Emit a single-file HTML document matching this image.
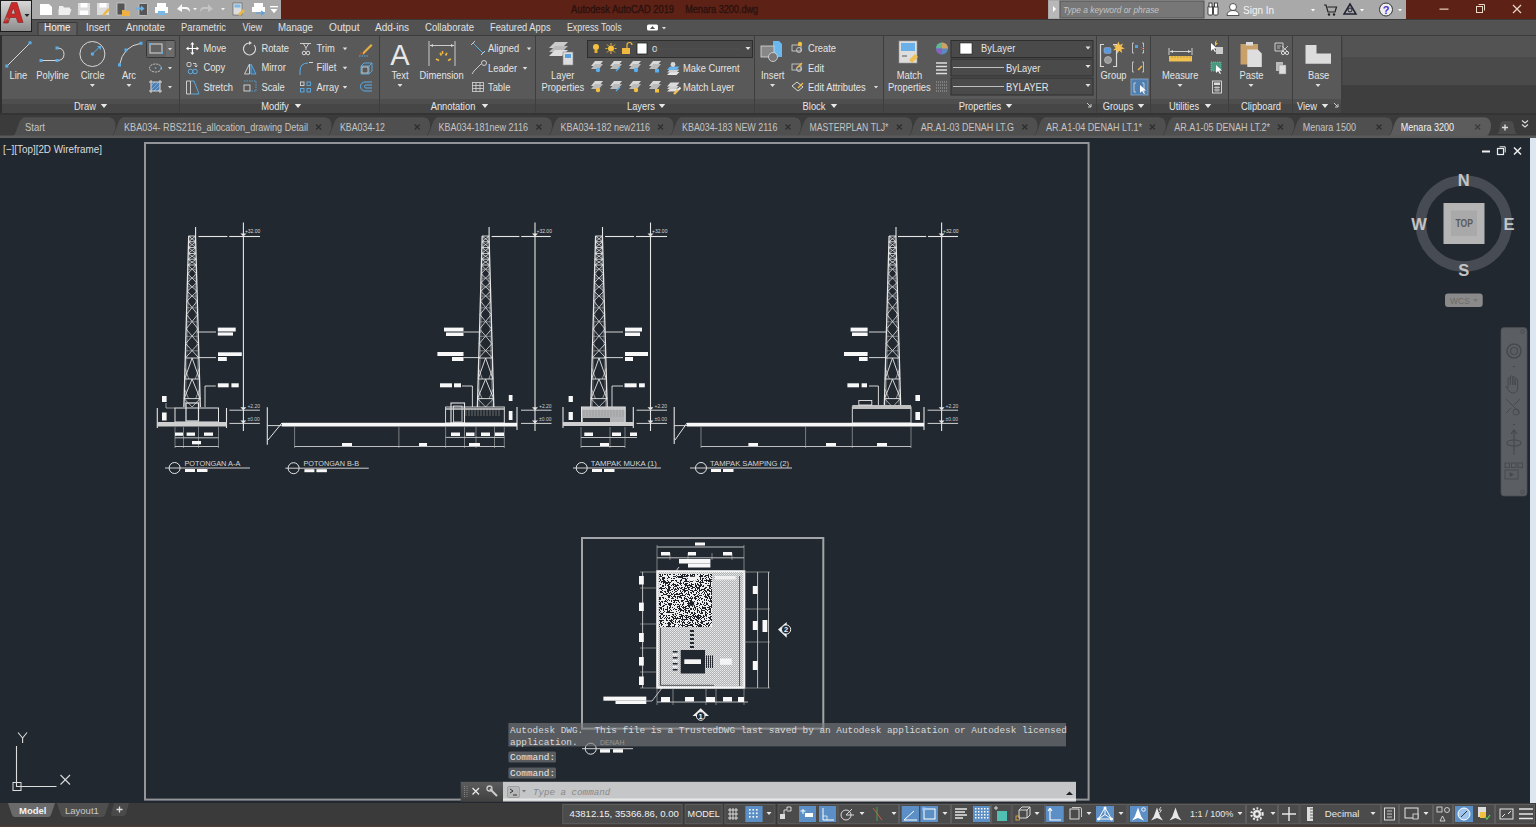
<!DOCTYPE html><html><head><meta charset="utf-8"><style>*{margin:0;padding:0;box-sizing:border-box}html,body{width:1536px;height:827px;overflow:hidden;background:#212830;font-family:"Liberation Sans",sans-serif;position:relative}.a{position:absolute;display:block}</style></head><body>
<svg class="a" style="left:0;top:0" width="1536" height="138" viewBox="0 0 1536 138">
<defs><linearGradient id="appbtn" x1="0" y1="0" x2="0" y2="1"><stop offset="0" stop-color="#d8d8d8"/><stop offset="1" stop-color="#8c8c8c"/></linearGradient><linearGradient id="rgrad" x1="0" y1="0" x2="0" y2="1"><stop offset="0" stop-color="#555"/><stop offset="0.35" stop-color="#4f4f4f"/><stop offset="1" stop-color="#3d3d3d"/></linearGradient><linearGradient id="tabg" x1="0" y1="0" x2="0" y2="1"><stop offset="0" stop-color="#555"/><stop offset="1" stop-color="#4a4a4a"/></linearGradient></defs>
<rect x="0" y="0" width="1536" height="19" fill="#5e2116"/>
<rect x="32" y="0" width="249" height="19" fill="#a9a9a9"/>
<rect x="1048" y="0" width="358" height="19" fill="#a9a9a9"/>
<text x="571" y="13" font-size="10" fill="#2a120e" text-anchor="start" font-weight="normal" xml:space="preserve" style="font-family:'Liberation Sans'" textLength="103" lengthAdjust="spacingAndGlyphs" stroke="#2a120e" stroke-width="0.35">Autodesk AutoCAD 2019</text>
<text x="685.2" y="13" font-size="10" fill="#2a120e" text-anchor="start" font-weight="normal" xml:space="preserve" style="font-family:'Liberation Sans'" textLength="73" lengthAdjust="spacingAndGlyphs" stroke="#2a120e" stroke-width="0.35">Menara 3200.dwg</text>
<rect x="1439.5" y="8.5" width="9" height="1.3" fill="#dcc4aa"/>
<rect x="1476.5" y="6.5" width="6" height="6" fill="none" stroke="#e8d8c8" stroke-width="1"/><path d="M1478.5,4.5 h6 v6" fill="none" stroke="#e8d8c8" stroke-width="1"/>
<path d="M1513,5 l8,8 M1521,5 l-8,8" stroke="#e8d8c8" stroke-width="1.2"/>
<rect x="1049" y="1" width="10" height="17" fill="#b8b8b8"/><path d="M1053,6 l3,3 l-3,3z" fill="#fff"/>
<rect x="1060" y="1" width="144" height="17" fill="#777" stroke="#555" stroke-width="1"/>
<text x="1063" y="13" font-size="9.5" fill="#c4c4c4" text-anchor="start" font-weight="normal" xml:space="preserve" style="font-family:'Liberation Sans'" font-style="italic" textLength="96" lengthAdjust="spacingAndGlyphs">Type a keyword or phrase</text>
<g fill="#fff" stroke="#222" stroke-width="0.8"><rect x="1208" y="6" width="4.5" height="9" rx="1"/><rect x="1213.5" y="6" width="4.5" height="9" rx="1"/><rect x="1209" y="3" width="3" height="4"/><rect x="1214.5" y="3" width="3" height="4"/></g>
<g fill="#fff" stroke="#333" stroke-width="0.8"><circle cx="1233" cy="7" r="3.5"/><path d="M1227,15.5 q0,-5 6,-5 q6,0 6,5z"/></g>
<text x="1243" y="13.5" font-size="10" fill="#f4f4f4" text-anchor="start" font-weight="normal" xml:space="preserve" style="font-family:'Liberation Sans'">Sign In</text>
<path d="M1311.0,9 h4 l-2.0,2.4z" fill="#fff"/>
<path d="M1324,5 h2 l2,7 h7 l1.5,-5 h-9" fill="none" stroke="#222" stroke-width="1.2"/><circle cx="1329" cy="14.5" r="1.2" fill="#222"/><circle cx="1334" cy="14.5" r="1.2" fill="#222"/>
<path d="M1350,4 l6,10 h-12z" fill="none" stroke="#223" stroke-width="1.5"/><circle cx="1350" cy="10" r="2" fill="none" stroke="#223" stroke-width="1"/>
<path d="M1360.0,9 h4 l-2.0,2.4z" fill="#fff"/>
<circle cx="1386" cy="9.5" r="6.5" fill="#eee" stroke="#333" stroke-width="1"/>
<text x="1386" y="13.5" font-size="11" fill="#5030d0" text-anchor="middle" font-weight="bold" xml:space="preserve" style="font-family:'Liberation Sans'">?</text>
<path d="M1398.0,9 h4 l-2.0,2.4z" fill="#fff"/>
<path d="M40,4 h9 l3,3 v8 h-12z" fill="#fff"/>
<path d="M59,6 h4 l1,1.5 h6 v1.5 h-11z M58.5,9 h13 l-2,6 h-11z" fill="#eee"/>
<g><rect x="78" y="3" width="12" height="12" fill="#ddd"/><rect x="80.5" y="3" width="7" height="4.5" fill="#fff"/><rect x="80" y="10.5" width="8" height="4.5" fill="#fff"/></g>
<g><rect x="97" y="3" width="12" height="12" fill="#ddd"/><rect x="99.5" y="3" width="7" height="4.5" fill="#fff"/><path d="M102,15 l6,-7 l2,2 l-6,6z" fill="#e8b84a"/></g>
<g><rect x="117" y="3" width="8" height="12" rx="1" fill="#555" stroke="#ccc" stroke-width="0.8"/><path d="M122,10 h3 l1,1 h4 v5 h-8z" fill="#f0b040"/></g>
<g><rect x="139" y="3.5" width="8.5" height="12" rx="1" fill="#555" stroke="#ccc" stroke-width="0.8"/><path d="M136,7.5 h5 v-2 l3.5,3 l-3.5,3 v-2 h-5z" fill="#6ab0e8"/></g>
<g><rect x="157" y="3" width="9" height="4" fill="#fff"/><rect x="155" y="7" width="13" height="6" fill="#fff"/><rect x="158" y="11" width="7" height="4" fill="#7ab8e8"/></g>
<path d="M177,9 l5,-5 v3 h4 q4,0 4,5 q-2,-3 -4,-3 h-4 v3z" fill="#fafafa"/>
<path d="M193.0,8 h4 l-2.0,2.4z" fill="#eee"/>
<path d="M213,9 l-5,-5 v3 h-4 q-4,0 -4,5 q2,-3 4,-3 h4 v3z" fill="#c4c4c4"/>
<path d="M221.0,8 h4 l-2.0,2.4z" fill="#eee"/>
<g><rect x="233" y="3" width="9" height="12" fill="#ddd" stroke="#555" stroke-width="0.6"/><rect x="234.5" y="4.5" width="6" height="3" fill="#7ab8e8"/><path d="M238,14 l5,-5 l2,2 l-5,5z" fill="#e8b84a"/></g>
<g><rect x="254" y="3" width="9" height="4" fill="#fff"/><rect x="252" y="7" width="13" height="5" fill="#fff"/><path d="M256,13 h8 M261,11 l3,2 l-3,2" stroke="#5aa0e0" stroke-width="1.2" fill="none"/></g>
<rect x="270" y="6" width="8" height="1.3" fill="#fff"/><path d="M270.5,9 h7 l-3.5,4.2z" fill="#fff"/>
<rect x="0" y="19" width="1536" height="16" fill="#525252"/>
<rect x="32" y="19" width="1504" height="1" fill="#3a3a3a"/>
<path d="M38,35 V22.5 h39 V35" fill="#5e5e5e" stroke="#383838" stroke-width="1"/>
<text x="44" y="31" font-size="10" fill="#f0f0f0" text-anchor="start" font-weight="normal" xml:space="preserve" style="font-family:'Liberation Sans'" textLength="26.6" lengthAdjust="spacingAndGlyphs">Home</text>
<text x="86" y="31" font-size="10" fill="#e0e0e0" text-anchor="start" font-weight="normal" xml:space="preserve" style="font-family:'Liberation Sans'" textLength="24" lengthAdjust="spacingAndGlyphs">Insert</text>
<text x="126" y="31" font-size="10" fill="#e0e0e0" text-anchor="start" font-weight="normal" xml:space="preserve" style="font-family:'Liberation Sans'" textLength="39" lengthAdjust="spacingAndGlyphs">Annotate</text>
<text x="181" y="31" font-size="10" fill="#e0e0e0" text-anchor="start" font-weight="normal" xml:space="preserve" style="font-family:'Liberation Sans'" textLength="45" lengthAdjust="spacingAndGlyphs">Parametric</text>
<text x="242.5" y="31" font-size="10" fill="#e0e0e0" text-anchor="start" font-weight="normal" xml:space="preserve" style="font-family:'Liberation Sans'" textLength="19.5" lengthAdjust="spacingAndGlyphs">View</text>
<text x="278" y="31" font-size="10" fill="#e0e0e0" text-anchor="start" font-weight="normal" xml:space="preserve" style="font-family:'Liberation Sans'" textLength="35" lengthAdjust="spacingAndGlyphs">Manage</text>
<text x="329" y="31" font-size="10" fill="#e0e0e0" text-anchor="start" font-weight="normal" xml:space="preserve" style="font-family:'Liberation Sans'" textLength="30.5" lengthAdjust="spacingAndGlyphs">Output</text>
<text x="375" y="31" font-size="10" fill="#e0e0e0" text-anchor="start" font-weight="normal" xml:space="preserve" style="font-family:'Liberation Sans'" textLength="34" lengthAdjust="spacingAndGlyphs">Add-ins</text>
<text x="425" y="31" font-size="10" fill="#e0e0e0" text-anchor="start" font-weight="normal" xml:space="preserve" style="font-family:'Liberation Sans'" textLength="49" lengthAdjust="spacingAndGlyphs">Collaborate</text>
<text x="490" y="31" font-size="10" fill="#e0e0e0" text-anchor="start" font-weight="normal" xml:space="preserve" style="font-family:'Liberation Sans'" textLength="60.6" lengthAdjust="spacingAndGlyphs">Featured Apps</text>
<text x="567" y="31" font-size="10" fill="#e0e0e0" text-anchor="start" font-weight="normal" xml:space="preserve" style="font-family:'Liberation Sans'" textLength="54.6" lengthAdjust="spacingAndGlyphs">Express Tools</text>
<rect x="647" y="24.5" width="11" height="6" rx="1.5" fill="#fff"/><path d="M650,29 l2.5,-3 l2.5,3z" fill="#525252"/>
<path d="M662.0,27 h4 l-2.0,2.4z" fill="#ddd"/>
<rect x="0.5" y="0.5" width="31" height="31" fill="url(#appbtn)" stroke="#1c1c1c" stroke-width="1"/>
<path d="M3.5,23 L11.5,2.5 h5.5 L23,22.5 h-5 l-1.8,-5 h-6.2 l-1.9,5.5z M11,14 h4.3 l-1.9,-6z" fill="#c82a2a" stroke="#7a2020" stroke-width="0.6"/><path d="M5,21 l2,-3 l2,2" stroke="#a87060" stroke-width="1.2" fill="none"/>
<path d="M24.5,14 h5 l-2.5,3z" fill="#222"/>
<rect x="0" y="35" width="1536" height="22" fill="#535353"/><rect x="0" y="57" width="1536" height="28" fill="#4a4a4a"/><rect x="0" y="85" width="1536" height="29" fill="#3e3e3e"/>
<rect x="0" y="35" width="1536" height="1" fill="#3c3c3c"/>
<rect x="0" y="35" width="2" height="79" fill="#2f2f2f"/>
<rect x="2" y="36" width="178" height="63" fill="#595959"/>
<rect x="2" y="99" width="178" height="5" fill="#4e4e4e"/>
<rect x="2" y="104" width="178" height="9.5" fill="#464646"/>
<rect x="179" y="36" width="1.3" height="78" fill="#3e3e3e"/>
<text transform="translate(85,110) scale(0.935,1)" x="0" y="0" font-size="10.0" fill="#e6e6e6" text-anchor="middle" font-weight="normal" xml:space="preserve" style="font-family:'Liberation Sans'">Draw</text>
<rect x="180" y="36" width="200" height="63" fill="#595959"/>
<rect x="180" y="99" width="200" height="5" fill="#4e4e4e"/>
<rect x="180" y="104" width="200" height="9.5" fill="#464646"/>
<rect x="379" y="36" width="1.3" height="78" fill="#3e3e3e"/>
<text transform="translate(275,110) scale(0.935,1)" x="0" y="0" font-size="10.0" fill="#e6e6e6" text-anchor="middle" font-weight="normal" xml:space="preserve" style="font-family:'Liberation Sans'">Modify</text>
<rect x="380" y="36" width="156" height="63" fill="#595959"/>
<rect x="380" y="99" width="156" height="5" fill="#4e4e4e"/>
<rect x="380" y="104" width="156" height="9.5" fill="#464646"/>
<rect x="535" y="36" width="1.3" height="78" fill="#3e3e3e"/>
<text transform="translate(453,110) scale(0.935,1)" x="0" y="0" font-size="10.0" fill="#e6e6e6" text-anchor="middle" font-weight="normal" xml:space="preserve" style="font-family:'Liberation Sans'">Annotation</text>
<rect x="536" y="36" width="219" height="63" fill="#595959"/>
<rect x="536" y="99" width="219" height="5" fill="#4e4e4e"/>
<rect x="536" y="104" width="219" height="9.5" fill="#464646"/>
<rect x="754" y="36" width="1.3" height="78" fill="#3e3e3e"/>
<text transform="translate(641,110) scale(0.935,1)" x="0" y="0" font-size="10.0" fill="#e6e6e6" text-anchor="middle" font-weight="normal" xml:space="preserve" style="font-family:'Liberation Sans'">Layers</text>
<rect x="755" y="36" width="129" height="63" fill="#595959"/>
<rect x="755" y="99" width="129" height="5" fill="#4e4e4e"/>
<rect x="755" y="104" width="129" height="9.5" fill="#464646"/>
<rect x="883" y="36" width="1.3" height="78" fill="#3e3e3e"/>
<text transform="translate(814,110) scale(0.935,1)" x="0" y="0" font-size="10.0" fill="#e6e6e6" text-anchor="middle" font-weight="normal" xml:space="preserve" style="font-family:'Liberation Sans'">Block</text>
<rect x="884" y="36" width="213" height="63" fill="#595959"/>
<rect x="884" y="99" width="213" height="5" fill="#4e4e4e"/>
<rect x="884" y="104" width="213" height="9.5" fill="#464646"/>
<rect x="1096" y="36" width="1.3" height="78" fill="#3e3e3e"/>
<text transform="translate(980,110) scale(0.935,1)" x="0" y="0" font-size="10.0" fill="#e6e6e6" text-anchor="middle" font-weight="normal" xml:space="preserve" style="font-family:'Liberation Sans'">Properties</text>
<rect x="1097" y="36" width="54" height="63" fill="#595959"/>
<rect x="1097" y="99" width="54" height="5" fill="#4e4e4e"/>
<rect x="1097" y="104" width="54" height="9.5" fill="#464646"/>
<rect x="1150" y="36" width="1.3" height="78" fill="#3e3e3e"/>
<text transform="translate(1118,110) scale(0.935,1)" x="0" y="0" font-size="10.0" fill="#e6e6e6" text-anchor="middle" font-weight="normal" xml:space="preserve" style="font-family:'Liberation Sans'">Groups</text>
<rect x="1151" y="36" width="78" height="63" fill="#595959"/>
<rect x="1151" y="99" width="78" height="5" fill="#4e4e4e"/>
<rect x="1151" y="104" width="78" height="9.5" fill="#464646"/>
<rect x="1228" y="36" width="1.3" height="78" fill="#3e3e3e"/>
<text transform="translate(1184,110) scale(0.935,1)" x="0" y="0" font-size="10.0" fill="#e6e6e6" text-anchor="middle" font-weight="normal" xml:space="preserve" style="font-family:'Liberation Sans'">Utilities</text>
<rect x="1229" y="36" width="64" height="63" fill="#595959"/>
<rect x="1229" y="99" width="64" height="5" fill="#4e4e4e"/>
<rect x="1229" y="104" width="64" height="9.5" fill="#464646"/>
<rect x="1292" y="36" width="1.3" height="78" fill="#3e3e3e"/>
<text transform="translate(1261,110) scale(0.935,1)" x="0" y="0" font-size="10.0" fill="#e6e6e6" text-anchor="middle" font-weight="normal" xml:space="preserve" style="font-family:'Liberation Sans'">Clipboard</text>
<rect x="1293" y="36" width="49" height="63" fill="#595959"/>
<rect x="1293" y="99" width="49" height="5" fill="#4e4e4e"/>
<rect x="1293" y="104" width="49" height="9.5" fill="#464646"/>
<rect x="1341" y="36" width="1.3" height="78" fill="#3e3e3e"/>
<text transform="translate(1307,110) scale(0.935,1)" x="0" y="0" font-size="10.0" fill="#e6e6e6" text-anchor="middle" font-weight="normal" xml:space="preserve" style="font-family:'Liberation Sans'">View</text>
<rect x="0" y="113" width="1536" height="1.5" fill="#343434"/>
<path d="M100.75,104 h6.5 l-3.25,3.9z" fill="#e8e8e8"/>
<path d="M294.75,104 h6.5 l-3.25,3.9z" fill="#e8e8e8"/>
<path d="M481.75,104 h6.5 l-3.25,3.9z" fill="#e8e8e8"/>
<path d="M658.75,104 h6.5 l-3.25,3.9z" fill="#e8e8e8"/>
<path d="M830.75,104 h6.5 l-3.25,3.9z" fill="#e8e8e8"/>
<path d="M1005.75,104 h6.5 l-3.25,3.9z" fill="#e8e8e8"/>
<path d="M1137.75,104 h6.5 l-3.25,3.9z" fill="#e8e8e8"/>
<path d="M1204.75,104 h6.5 l-3.25,3.9z" fill="#e8e8e8"/>
<path d="M1321.75,104 h6.5 l-3.25,3.9z" fill="#e8e8e8"/>
<path d="M1087,103 l3.5,3.5 M1091,104 v3 h-3" stroke="#ddd" stroke-width="0.9" fill="none"/>
<path d="M1334,103 l3.5,3.5 M1338,104 v3 h-3" stroke="#ddd" stroke-width="0.9" fill="none"/>
<path d="M7,66 L30,43" stroke="#d8d8d8" stroke-width="1"/><rect x="5.3" y="64.5" width="3" height="3" fill="#5aaee8"/><rect x="28.5" y="41.3" width="3" height="3" fill="#5aaee8"/>
<text transform="translate(9.5,79) scale(0.935,1)" x="0" y="0" font-size="10.0" fill="#e4e4e4" text-anchor="start" font-weight="normal" xml:space="preserve" style="font-family:'Liberation Sans'">Line</text>
<path d="M41,60.5 H57 M57,48 q7,0 7,6.2 q0,6.3 -7,6.3" stroke="#d8d8d8" stroke-width="1" fill="none"/><rect x="39.5" y="59.0" width="3" height="3" fill="#5aaee8"/><rect x="55.5" y="59.0" width="3" height="3" fill="#5aaee8"/><rect x="55.5" y="46.5" width="3" height="3" fill="#5aaee8"/>
<text transform="translate(36.3,79) scale(0.935,1)" x="0" y="0" font-size="10.0" fill="#e4e4e4" text-anchor="start" font-weight="normal" xml:space="preserve" style="font-family:'Liberation Sans'">Polyline</text>
<circle cx="92.4" cy="54" r="12.5" stroke="#d8d8d8" stroke-width="1" fill="none"/><path d="M92.4,54 L100,46.5" stroke="#5aaee8" stroke-width="1"/><path d="M97,46 h4 v4z" fill="#5aaee8"/><rect x="90.9" y="52.5" width="3" height="3" fill="#5aaee8"/>
<text transform="translate(80.7,79) scale(0.935,1)" x="0" y="0" font-size="10.0" fill="#e4e4e4" text-anchor="start" font-weight="normal" xml:space="preserve" style="font-family:'Liberation Sans'">Circle</text><path d="M89.9,84 h5 l-2.5,3.0z" fill="#e0e0e0"/>
<path d="M119.5,65 Q123,46 141,43.3" stroke="#d8d8d8" stroke-width="1" fill="none"/><rect x="118.0" y="63.5" width="3" height="3" fill="#5aaee8"/><rect x="139.5" y="41.8" width="3" height="3" fill="#5aaee8"/><rect x="124.5" y="48.5" width="3" height="3" fill="#5aaee8"/>
<text transform="translate(122,79) scale(0.935,1)" x="0" y="0" font-size="10.0" fill="#e4e4e4" text-anchor="start" font-weight="normal" xml:space="preserve" style="font-family:'Liberation Sans'">Arc</text><path d="M126.5,84 h5 l-2.5,3.0z" fill="#e0e0e0"/>
<rect x="146.5" y="40.5" width="28.5" height="17" rx="1" fill="#626262" stroke="#363636" stroke-width="1"/><rect x="166" y="41" width="8.5" height="16" fill="#6c6c6c"/>
<rect x="150" y="44" width="12" height="9" fill="none" stroke="#d8d8d8" stroke-width="1"/><rect x="149.0" y="43.0" width="2" height="2" fill="#5aaee8"/><rect x="161.0" y="52.0" width="2" height="2" fill="#5aaee8"/><path d="M168.0,48 h4 l-2.0,2.4z" fill="#e0e0e0"/>
<ellipse cx="155.5" cy="68" rx="6" ry="4" fill="none" stroke="#d8d8d8" stroke-width="0.9" stroke-dasharray="2,1"/><rect x="154.7" y="67.2" width="1.6" height="1.6" fill="#5aaee8"/><rect x="160.2" y="67.2" width="1.6" height="1.6" fill="#5aaee8"/><path d="M168.0,67 h4 l-2.0,2.4z" fill="#e0e0e0"/>
<rect x="151" y="82" width="9" height="9" fill="#4f7fb2"/><path d="M151,86 l4,-4 M151,90 l8,-8 M154,91 l6,-6 M158,91 l2,-2" stroke="#8ab4e0" stroke-width="0.8"/><path d="M149,82 h13 M149,91 h13 M151,80 v13 M160,80 v13" stroke="#d8d8d8" stroke-width="1"/><path d="M168.0,86 h4 l-2.0,2.4z" fill="#e0e0e0"/>
<text transform="translate(203.4,52) scale(0.935,1)" x="0" y="0" font-size="10.0" fill="#e4e4e4" text-anchor="start" font-weight="normal" xml:space="preserve" style="font-family:'Liberation Sans'">Move</text>
<text transform="translate(203.4,71.3) scale(0.935,1)" x="0" y="0" font-size="10.0" fill="#e4e4e4" text-anchor="start" font-weight="normal" xml:space="preserve" style="font-family:'Liberation Sans'">Copy</text>
<text transform="translate(203.4,90.5) scale(0.935,1)" x="0" y="0" font-size="10.0" fill="#e4e4e4" text-anchor="start" font-weight="normal" xml:space="preserve" style="font-family:'Liberation Sans'">Stretch</text>
<text transform="translate(261.4,52) scale(0.935,1)" x="0" y="0" font-size="10.0" fill="#e4e4e4" text-anchor="start" font-weight="normal" xml:space="preserve" style="font-family:'Liberation Sans'">Rotate</text>
<text transform="translate(261.4,71.3) scale(0.935,1)" x="0" y="0" font-size="10.0" fill="#e4e4e4" text-anchor="start" font-weight="normal" xml:space="preserve" style="font-family:'Liberation Sans'">Mirror</text>
<text transform="translate(261.4,90.5) scale(0.935,1)" x="0" y="0" font-size="10.0" fill="#e4e4e4" text-anchor="start" font-weight="normal" xml:space="preserve" style="font-family:'Liberation Sans'">Scale</text>
<text transform="translate(316.5,52) scale(0.935,1)" x="0" y="0" font-size="10.0" fill="#e4e4e4" text-anchor="start" font-weight="normal" xml:space="preserve" style="font-family:'Liberation Sans'">Trim</text>
<text transform="translate(316.5,71.3) scale(0.935,1)" x="0" y="0" font-size="10.0" fill="#e4e4e4" text-anchor="start" font-weight="normal" xml:space="preserve" style="font-family:'Liberation Sans'">Fillet</text>
<text transform="translate(316.5,90.5) scale(0.935,1)" x="0" y="0" font-size="10.0" fill="#e4e4e4" text-anchor="start" font-weight="normal" xml:space="preserve" style="font-family:'Liberation Sans'">Array</text>
<path d="M342.75,47.5 h4.5 l-2.25,2.6999999999999997z" fill="#e0e0e0"/>
<path d="M342.75,66.8 h4.5 l-2.25,2.6999999999999997z" fill="#e0e0e0"/>
<path d="M342.75,86.0 h4.5 l-2.25,2.6999999999999997z" fill="#e0e0e0"/>
<path d="M192.4,43 v11 M187,48.5 h11" stroke="#fff" stroke-width="1.2"/><path d="M192.4,42 l-2,2.5 h4z M192.4,55 l-2,-2.5 h4z M186,48.5 l2.5,-2 v4z M199,48.5 l-2.5,-2 v4z" fill="#fff"/>
<rect x="187" y="62.5" width="4" height="4" rx="1" fill="none" stroke="#d8d8d8" stroke-width="0.9"/><path d="M193,63.5 h3 v3.5 M194.5,65.5 l1.5,1.5 l1.5,-1.5" stroke="#d8d8d8" stroke-width="0.9" fill="none"/><circle cx="190.5" cy="71.5" r="2.3" fill="none" stroke="#5aaee8" stroke-width="1"/><circle cx="195" cy="71.5" r="2.3" fill="none" stroke="#5aaee8" stroke-width="1"/>
<path d="M186.5,81 h4 v13 h-4z" fill="none" stroke="#d8d8d8" stroke-width="0.9"/><path d="M191,81 h3 l5,13 h-8" stroke="#5aaee8" stroke-width="0.9" fill="none"/>
<path d="M254,45 a6,6 0 1 1 -4,-2" stroke="#d8d8d8" stroke-width="1.1" fill="none"/><path d="M249,41 l3,2 l-3,2z" fill="#d8d8d8"/>
<path d="M244.5,74 l5,-10 v10z" fill="none" stroke="#d8d8d8" stroke-width="0.9"/><path d="M251,64 l5,10 h-5z" fill="#3d6a90" stroke="#5aaee8" stroke-width="0.9"/>
<rect x="244" y="85" width="6" height="6" fill="none" stroke="#d8d8d8" stroke-width="0.9"/><path d="M244,81 h12 v10 h-6" stroke="#5aaee8" stroke-width="0.8" stroke-dasharray="1.5,1" fill="none"/>
<path d="M300,43.5 h11 M303,43 l3,5 l3,-5 M306,48 v2" stroke="#d8d8d8" stroke-width="0.9" fill="none"/><circle cx="304" cy="53" r="1.8" fill="none" stroke="#d8d8d8"/><circle cx="308" cy="53" r="1.8" fill="none" stroke="#d8d8d8"/>
<path d="M300,75 v-4 q0,-8 8,-8" stroke="#5aaee8" stroke-width="1" fill="none"/><path d="M309,62.5 h4" stroke="#d8d8d8"/>
<g fill="none" stroke="#d8d8d8" stroke-width="0.9"><rect x="300.5" y="82" width="3.5" height="3.5"/><rect x="300.5" y="88.5" width="3.5" height="3.5" stroke="#5aaee8"/><rect x="307" y="82" width="3.5" height="3.5" stroke="#5aaee8"/><rect x="307" y="88.5" width="3.5" height="3.5" stroke="#5aaee8"/></g>
<path d="M361,54 l8,-8 l2,-2 l1.5,1.5 l-9,9z" fill="#e8b040"/><path d="M359,56 h10" stroke="#5aaee8" stroke-width="1" stroke-dasharray="1.5,1"/><rect x="360" y="52" width="3" height="3" fill="#8a5a3a"/>
<path d="M361,66 h8 l3,-3 h-8z M361,66 v8 h8 v-8 M369,74 l3,-3 v-8" fill="none" stroke="#5aaee8" stroke-width="0.9"/><rect x="362" y="67" width="6" height="6" fill="none" stroke="#d8d8d8" stroke-width="0.8"/>
<path d="M372,82 h-7 a4.5,4.5 0 0 0 0,9 h7 M372,85 h-6 a1.5,1.5 0 0 0 0,3 h6" stroke="#5aaee8" stroke-width="1" fill="none"/>
<text x="400" y="65" font-size="29" fill="#e8e8e8" text-anchor="middle" font-weight="normal" xml:space="preserve" style="font-family:'Liberation Sans'">A</text>
<text transform="translate(400,79) scale(0.935,1)" x="0" y="0" font-size="10.0" fill="#e4e4e4" text-anchor="middle" font-weight="normal" xml:space="preserve" style="font-family:'Liberation Sans'">Text</text><path d="M397.5,84 h5 l-2.5,3.0z" fill="#e0e0e0"/>
<path d="M429,41 v25 M455,41 v25 M430,45.5 h24" stroke="#d8d8d8" stroke-width="0.9"/><path d="M430,45.5 l3,-1.5 v3z M454,45.5 l-3,-1.5 v3z" fill="#d8d8d8"/>
<g stroke="#f0b840" stroke-width="1.6"><path d="M436,59 l3,1.5"/><path d="M448,60.5 l3,-1.5"/><path d="M440,53 l1.5,2.5"/><path d="M445.5,55.5 l1.5,-2.5"/><path d="M442.5,51 v3"/></g>
<text transform="translate(419.6,79) scale(0.935,1)" x="0" y="0" font-size="10.0" fill="#e4e4e4" text-anchor="start" font-weight="normal" xml:space="preserve" style="font-family:'Liberation Sans'">Dimension</text>
<path d="M473,43 l10,10" stroke="#5aaee8" stroke-width="1"/><path d="M471,45 l4,-4 M481,55 l4,-4" stroke="#d8d8d8" stroke-width="0.9"/>
<text transform="translate(488,52) scale(0.935,1)" x="0" y="0" font-size="10.0" fill="#e4e4e4" text-anchor="start" font-weight="normal" xml:space="preserve" style="font-family:'Liberation Sans'">Aligned</text><path d="M526.75,47.5 h4.5 l-2.25,2.6999999999999997z" fill="#e0e0e0"/>
<path d="M472,74 l2,-3 l7,-7" stroke="#d8d8d8" stroke-width="0.9" fill="none"/><circle cx="484" cy="63" r="2.5" fill="none" stroke="#d8d8d8" stroke-width="0.9"/>
<text transform="translate(488,71.5) scale(0.935,1)" x="0" y="0" font-size="10.0" fill="#e4e4e4" text-anchor="start" font-weight="normal" xml:space="preserve" style="font-family:'Liberation Sans'">Leader</text><path d="M522.75,67 h4.5 l-2.25,2.6999999999999997z" fill="#e0e0e0"/>
<g fill="none" stroke="#d8d8d8" stroke-width="0.8"><rect x="472.5" y="82.5" width="11" height="9"/><path d="M472.5,85.5 h11 M472.5,88.5 h11 M476,82.5 v9 M480,82.5 v9"/></g>
<text transform="translate(488,90.5) scale(0.935,1)" x="0" y="0" font-size="10.0" fill="#e4e4e4" text-anchor="start" font-weight="normal" xml:space="preserve" style="font-family:'Liberation Sans'">Table</text>
<path d="M549,48 l6,-6 h13 l-6,6z" fill="#ccc"/><path d="M549,52 l6,-6 h13 l-6,6z" fill="#bbb"/><path d="M549,56 l6,-6 h13 l-6,6z" fill="#ddd"/><rect x="563" y="52" width="10" height="13" fill="#ddd" stroke="#888" stroke-width="0.6"/><rect x="565" y="54" width="6" height="4" fill="#5aa0e0"/>
<text transform="translate(551,79) scale(0.935,1)" x="0" y="0" font-size="10.0" fill="#e4e4e4" text-anchor="start" font-weight="normal" xml:space="preserve" style="font-family:'Liberation Sans'">Layer</text><text transform="translate(541.5,91) scale(0.935,1)" x="0" y="0" font-size="10.0" fill="#e4e4e4" text-anchor="start" font-weight="normal" xml:space="preserve" style="font-family:'Liberation Sans'">Properties</text>
<rect x="587.5" y="40.5" width="165" height="17" fill="#4a4a4a" stroke="#2e2e2e" stroke-width="1"/>
<circle cx="596" cy="47" r="3" fill="#f5c040"/><rect x="594.5" y="50" width="3" height="3" fill="#e8b030"/>
<circle cx="611" cy="48.5" r="3" fill="#f5c040"/><path d="M611,43 v2 M611,52 v2 M605.5,48.5 h2 M614.5,48.5 h2 M607,44.5 l1.5,1.5 M613.5,51 l1.5,1.5 M607,52.5 l1.5,-1.5 M613.5,46 l1.5,-1.5" stroke="#f5c040" stroke-width="0.9"/>
<rect x="622" y="48" width="8" height="6" fill="#f0b840"/><path d="M627,48 v-3 a2.5,2.5 0 0 1 5,0" fill="none" stroke="#f0b840" stroke-width="1.2"/>
<rect x="637" y="43" width="10" height="11" fill="#fff" stroke="#222" stroke-width="0.8"/>
<text x="652" y="52" font-size="9.5" fill="#e4e4e4" text-anchor="start" font-weight="normal" xml:space="preserve" style="font-family:'Liberation Sans'">0</text>
<path d="M654,49 H740" stroke="#5a5a5a" stroke-width="0.8" stroke-dasharray="1,1"/><path d="M745.5,47 h5 l-2.5,3.0z" fill="#e0e0e0"/>
<path d="M591,66 l4,-5 h8 l-4,5z" fill="#d8d8d8"/><path d="M591,69 l4,-5 h8 l-4,5z" fill="#bbb"/>
<path d="M591,86 l4,-5 h8 l-4,5z" fill="#d8d8d8"/><path d="M591,89 l4,-5 h8 l-4,5z" fill="#bbb"/>
<path d="M610,66 l4,-5 h8 l-4,5z" fill="#d8d8d8"/><path d="M610,69 l4,-5 h8 l-4,5z" fill="#bbb"/>
<path d="M610,86 l4,-5 h8 l-4,5z" fill="#d8d8d8"/><path d="M610,89 l4,-5 h8 l-4,5z" fill="#bbb"/>
<path d="M629,66 l4,-5 h8 l-4,5z" fill="#d8d8d8"/><path d="M629,69 l4,-5 h8 l-4,5z" fill="#bbb"/>
<path d="M629,86 l4,-5 h8 l-4,5z" fill="#d8d8d8"/><path d="M629,89 l4,-5 h8 l-4,5z" fill="#bbb"/>
<path d="M649,66 l4,-5 h8 l-4,5z" fill="#d8d8d8"/><path d="M649,69 l4,-5 h8 l-4,5z" fill="#bbb"/>
<path d="M649,86 l4,-5 h8 l-4,5z" fill="#d8d8d8"/><path d="M649,89 l4,-5 h8 l-4,5z" fill="#bbb"/>
<circle cx="598" cy="70" r="2.2" fill="#5ab0f0"/><path d="M616,71 l4,-4" stroke="#5ab0f0" stroke-width="1.2"/><circle cx="636" cy="70" r="2.2" fill="#5ab0f0"/><rect x="655" y="69" width="4" height="3.5" fill="#5ab0f0"/>
<circle cx="598" cy="90" r="2.2" fill="#f5c040"/><path d="M616,91 l4,-4" stroke="#5ab0f0" stroke-width="1.2"/><circle cx="636" cy="90" r="2.2" fill="#f5c040"/><rect x="655" y="89" width="4" height="3.5" fill="#f5c040"/>
<path d="M667,75 l3,-3 h9.5 l-3,3z" fill="#e6e6e6"/><path d="M667,72.5 l3,-3 h9.5 l-3,3z" fill="#d0d0d0"/><path d="M667,70 l3,-3.5 h9.5 l-3,3.5z" fill="#6ab4ee"/><circle cx="673" cy="64.5" r="2.4" fill="#d8d8d8"/>
<path d="M667,91.5 l3,-3 h9 l-3,3z" fill="#e0e0e0"/><path d="M667,89 l3,-3 h9 l-3,3z" fill="#cfcfcf"/><path d="M667,86.5 l3.5,-4 h9 l-3.5,4z" fill="#dcdcdc"/><path d="M674,94 l4,-4" stroke="#f0c050" stroke-width="2.4"/><path d="M678,90 l2.5,-2.5" stroke="#eee" stroke-width="2"/>
<text transform="translate(683,71.5) scale(0.935,1)" x="0" y="0" font-size="10.0" fill="#e4e4e4" text-anchor="start" font-weight="normal" xml:space="preserve" style="font-family:'Liberation Sans'">Make Current</text><text transform="translate(683,90.5) scale(0.935,1)" x="0" y="0" font-size="10.0" fill="#e4e4e4" text-anchor="start" font-weight="normal" xml:space="preserve" style="font-family:'Liberation Sans'">Match Layer</text>
<path d="M773,41 h6 l3,3 v13 h-9z" fill="#6ab8f0"/><rect x="761" y="46" width="13" height="11" fill="#888" stroke="#ddd" stroke-width="0.8"/><circle cx="773" cy="57" r="4.5" fill="#777" stroke="#ddd" stroke-width="0.8"/>
<text transform="translate(761,79) scale(0.935,1)" x="0" y="0" font-size="10.0" fill="#e4e4e4" text-anchor="start" font-weight="normal" xml:space="preserve" style="font-family:'Liberation Sans'">Insert</text><path d="M770.0,84 h5 l-2.5,3.0z" fill="#e0e0e0"/>
<rect x="792" y="45" width="9" height="6" fill="none" stroke="#d8d8d8" stroke-width="0.8"/><circle cx="799" cy="50" r="2.5" fill="none" stroke="#d8d8d8" stroke-width="0.8"/><circle cx="800" cy="44" r="2.2" fill="#f0c040"/>
<text transform="translate(808,52) scale(0.935,1)" x="0" y="0" font-size="10.0" fill="#e4e4e4" text-anchor="start" font-weight="normal" xml:space="preserve" style="font-family:'Liberation Sans'">Create</text>
<rect x="792" y="64" width="9" height="6" fill="none" stroke="#d8d8d8" stroke-width="0.8"/><circle cx="799" cy="69" r="2.5" fill="none" stroke="#d8d8d8" stroke-width="0.8"/><path d="M797,68 l5,-5" stroke="#f0b840" stroke-width="1.5"/>
<text transform="translate(808,71.5) scale(0.935,1)" x="0" y="0" font-size="10.0" fill="#e4e4e4" text-anchor="start" font-weight="normal" xml:space="preserve" style="font-family:'Liberation Sans'">Edit</text>
<path d="M792,86 l5,-4 l6,5 l-5,4z" fill="none" stroke="#d8d8d8" stroke-width="1"/><path d="M798,88 l5,-5" stroke="#f0b840" stroke-width="1.5"/>
<text transform="translate(808,90.5) scale(0.935,1)" x="0" y="0" font-size="10.0" fill="#e4e4e4" text-anchor="start" font-weight="normal" xml:space="preserve" style="font-family:'Liberation Sans'">Edit Attributes</text><path d="M874.0,86 h4 l-2.0,2.4z" fill="#e0e0e0"/>
<rect x="899" y="41" width="18" height="22" fill="#ddd" stroke="#999" stroke-width="0.6"/><rect x="901" y="43" width="14" height="8" fill="#6ab0e8"/><path d="M909,60 l6,-6 l3,3 l-6,6z" fill="#f0c050"/><path d="M902,56 h5" stroke="#555"/>
<text transform="translate(896.7,79) scale(0.935,1)" x="0" y="0" font-size="10.0" fill="#e4e4e4" text-anchor="start" font-weight="normal" xml:space="preserve" style="font-family:'Liberation Sans'">Match</text><text transform="translate(888,91) scale(0.935,1)" x="0" y="0" font-size="10.0" fill="#e4e4e4" text-anchor="start" font-weight="normal" xml:space="preserve" style="font-family:'Liberation Sans'">Properties</text>
<circle cx="942" cy="48.5" r="6" fill="#5a8ac0"/><path d="M942,48.5 V42.5 A6,6 0 0 1 948,48.5z" fill="#d0a060"/><path d="M942,48.5 H936 A6,6 0 0 1 942,42.5z" fill="#60b890"/><path d="M942,48.5 V54.5 A6,6 0 0 1 936,48.5z" fill="#8a60c0"/>
<rect x="951" y="40.5" width="142" height="17" fill="#4a4a4a" stroke="#2e2e2e" stroke-width="1"/><path d="M1085.5,46.5 h5 l-2.5,3.0z" fill="#e0e0e0"/>
<rect x="951" y="59" width="142" height="17" fill="#4a4a4a" stroke="#2e2e2e" stroke-width="1"/><path d="M1085.5,65 h5 l-2.5,3.0z" fill="#e0e0e0"/>
<rect x="951" y="78" width="142" height="17" fill="#4a4a4a" stroke="#2e2e2e" stroke-width="1"/><path d="M1085.5,84 h5 l-2.5,3.0z" fill="#e0e0e0"/>
<rect x="960" y="43" width="12" height="11" fill="#fff" stroke="#222" stroke-width="0.6"/>
<text transform="translate(981,52) scale(0.935,1)" x="0" y="0" font-size="10.0" fill="#e4e4e4" text-anchor="start" font-weight="normal" xml:space="preserve" style="font-family:'Liberation Sans'">ByLayer</text>
<path d="M953,67.5 H1004" stroke="#ddd" stroke-width="0.8"/><text transform="translate(1006,71.5) scale(0.935,1)" x="0" y="0" font-size="10.0" fill="#e4e4e4" text-anchor="start" font-weight="normal" xml:space="preserve" style="font-family:'Liberation Sans'">ByLayer</text>
<path d="M953,86.5 H1004" stroke="#ddd" stroke-width="0.8"/><text transform="translate(1006,90.5) scale(0.935,1)" x="0" y="0" font-size="10.0" fill="#e4e4e4" text-anchor="start" font-weight="normal" xml:space="preserve" style="font-family:'Liberation Sans'">BYLAYER</text>
<path d="M936,63 h11 M936,66.5 h11 M936,70 h11 M936,73.5 h11" stroke="#ddd" stroke-width="1.3"/>
<path d="M936,82 h11 M936,85 h11 M936,88 h11 M936,91 h11" stroke="#bbb" stroke-width="0.8" stroke-dasharray="1,1"/>
<path d="M1104,44.5 h-3.5 v22 h3.5 M1113,44.5 h3.5 v22 h-3.5" stroke="#d8d8d8" stroke-width="1.2" fill="none"/><rect x="1104" y="47.5" width="7" height="6" rx="1.5" fill="#5a9ad8" stroke="#aac" stroke-width="0.5"/><circle cx="1108" cy="60" r="3.5" fill="#999" stroke="#bbb" stroke-width="0.8"/><path d="M1118.5,41.5 l1.2,3.5 l3.5,-1.5 l-1.8,3.3 l3.5,1.7 l-3.6,0.8 l1,3.6 l-3,-2.2 l-2.2,3 l-0.5,-3.6 l-3.7,0.2 l2.8,-2.4 l-2.6,-2.6 l3.6,0.3z" fill="#f5c050"/>
<text transform="translate(1100.6,79) scale(0.935,1)" x="0" y="0" font-size="10.0" fill="#e4e4e4" text-anchor="start" font-weight="normal" xml:space="preserve" style="font-family:'Liberation Sans'">Group</text>
<g fill="none" stroke="#d8d8d8" stroke-width="0.8"><path d="M1134,43 h-1.5 v10 h1.5 M1142,43 h1.5 v10 h-1.5"/><path d="M1134,62 h-1.5 v10 h1.5 M1142,62 h1.5 v10 h-1.5"/></g><rect x="1135" y="45" width="3" height="3" fill="#5aa0e0"/><path d="M1141,47 l3,3 M1144,47 l-3,3" stroke="#d05050"/><path d="M1138,70 l4,-4" stroke="#f0b840" stroke-width="1.4"/>
<rect x="1131" y="79" width="17" height="16" fill="#4f7fb0" stroke="#88aacc" stroke-width="0.8"/><path d="M1136,83 h-2 v9 h2 M1142,83 h2 v9" stroke="#ddd" stroke-width="0.8" fill="none"/><path d="M1140,85 l0,8 l2,-2 l2,3 l1,-0.5 l-2,-3 l3,0z" fill="#fff"/>
<path d="M1169,48 v7 M1192,48 v7 M1170,51.5 h21" stroke="#ddd" stroke-width="0.9"/><path d="M1170,51.5 l3,-1.5 v3z M1191,51.5 l-3,-1.5 v3z" fill="#ddd"/><rect x="1169" y="56" width="23" height="5.5" fill="#f0c050"/><path d="M1172,56 v2 M1175,56 v2 M1178,56 v2 M1181,56 v2 M1184,56 v2 M1187,56 v2 M1190,56 v2" stroke="#a08030" stroke-width="0.6"/>
<text transform="translate(1162,79) scale(0.935,1)" x="0" y="0" font-size="10.0" fill="#e4e4e4" text-anchor="start" font-weight="normal" xml:space="preserve" style="font-family:'Liberation Sans'">Measure</text><path d="M1177.5,84 h5 l-2.5,3.0z" fill="#e0e0e0"/>
<path d="M1211,43 v8 l2,-2 l2,3 l1,-0.5 l-2,-3 h3z" fill="#fff"/><rect x="1216" y="47" width="7" height="7" fill="#ccc"/><path d="M1215,42 l2,-2 l-1,3 h2 l-3,3" fill="#f0c040"/>
<rect x="1211" y="62" width="10" height="9" fill="#4a9a80" stroke="#6cc" stroke-width="0.8" stroke-dasharray="1,1"/><path d="M1216,65 v8 l2,-2 l2,3 l1,-0.5 l-2,-3 h3z" fill="#fff"/>
<rect x="1212.5" y="81" width="9" height="12" fill="none" stroke="#ddd" stroke-width="0.9"/><rect x="1214" y="82.5" width="6" height="2.5" fill="#ddd"/><path d="M1214,87.5 h6 M1214,90 h6 M1216,86 v6 M1218,86 v6" stroke="#ddd" stroke-width="0.7"/>
<rect x="1240.5" y="44" width="17.5" height="20.5" fill="#c8a06a"/><rect x="1246" y="42" width="7" height="3.5" fill="#ddd"/><path d="M1247.3,49.4 h10.5 l4,4 v13.7 h-14.5z" fill="#dedede"/>
<text transform="translate(1239.6,79) scale(0.935,1)" x="0" y="0" font-size="10.0" fill="#e4e4e4" text-anchor="start" font-weight="normal" xml:space="preserve" style="font-family:'Liberation Sans'">Paste</text><path d="M1248.5,84 h5 l-2.5,3.0z" fill="#e0e0e0"/>
<path d="M1275,43 h8 v8 h-8z" fill="none" stroke="#ddd" stroke-width="0.9"/><path d="M1277,46 h4 M1277,48 h3" stroke="#ddd" stroke-width="0.7"/><circle cx="1283" cy="53" r="1.6" fill="none" stroke="#ddd"/><circle cx="1287" cy="53" r="1.6" fill="none" stroke="#ddd"/><path d="M1282,46 l6,6 M1288,46 l-6,6" stroke="#ddd" stroke-width="0.8"/>
<rect x="1276" y="62" width="7" height="9" fill="#bbb"/><rect x="1279" y="65" width="7" height="9" fill="#ddd" stroke="#888" stroke-width="0.5"/>
<text x="1240.7" y="110" font-size="1" fill="#e4e4e4" text-anchor="start" font-weight="normal" xml:space="preserve" style="font-family:'Liberation Sans'"></text>
<path d="M1305.5,45 h11 v8.5 h14.5 v10.2 h-25.5z" fill="#dcdcdc"/>
<text transform="translate(1308,79) scale(0.935,1)" x="0" y="0" font-size="10.0" fill="#e4e4e4" text-anchor="start" font-weight="normal" xml:space="preserve" style="font-family:'Liberation Sans'">Base</text><path d="M1315.5,84 h5 l-2.5,3.0z" fill="#e0e0e0"/>
<rect x="0" y="114.5" width="1536" height="23.5" fill="#3b3b3b"/>
<path d="M12.5,136 C17,136 18,118 24,117.5 H109 C114,117.5 115.5,122 115.5,125.5 C115.5,130 113,136 111,136 Z" fill="#4f4f4f"/>
<path d="M24,118 H109" stroke="#585858" stroke-width="1" stroke-dasharray="1,1"/>
<text x="25" y="130.6" font-size="10.4" fill="#c4c4c4" text-anchor="start" font-weight="normal" xml:space="preserve" style="font-family:'Liberation Sans'" textLength="20" lengthAdjust="spacingAndGlyphs">Start</text>
<path d="M111.5,136 C116,136 117,118 123,117.5 H325 C330,117.5 331.5,122 331.5,125.5 C331.5,130 329,136 327,136 Z" fill="#4f4f4f"/>
<path d="M123,118 H325" stroke="#585858" stroke-width="1" stroke-dasharray="1,1"/>
<text x="124" y="130.6" font-size="10.4" fill="#c4c4c4" text-anchor="start" font-weight="normal" xml:space="preserve" style="font-family:'Liberation Sans'" textLength="184" lengthAdjust="spacingAndGlyphs">KBA034- RBS2116_allocation_drawing Detail</text>
<path d="M316.1,124.5 l5,5 M321.1,124.5 l-5,5" stroke="#2e2e2e" stroke-width="1.35"/>
<path d="M327.5,136 C332,136 333,118 339,117.5 H423.6 C428.6,117.5 430.1,122 430.1,125.5 C430.1,130 427.6,136 425.6,136 Z" fill="#4f4f4f"/>
<path d="M339,118 H423.6" stroke="#585858" stroke-width="1" stroke-dasharray="1,1"/>
<text x="340" y="130.6" font-size="10.4" fill="#c4c4c4" text-anchor="start" font-weight="normal" xml:space="preserve" style="font-family:'Liberation Sans'" textLength="45" lengthAdjust="spacingAndGlyphs">KBA034-12</text>
<path d="M414.7,124.5 l5,5 M419.7,124.5 l-5,5" stroke="#2e2e2e" stroke-width="1.35"/>
<path d="M426.1,136 C430.6,136 431.6,118 437.6,117.5 H545.5 C550.5,117.5 552.0,122 552.0,125.5 C552.0,130 549.5,136 547.5,136 Z" fill="#4f4f4f"/>
<path d="M437.6,118 H545.5" stroke="#585858" stroke-width="1" stroke-dasharray="1,1"/>
<text x="438.6" y="130.6" font-size="10.4" fill="#c4c4c4" text-anchor="start" font-weight="normal" xml:space="preserve" style="font-family:'Liberation Sans'" textLength="89.3" lengthAdjust="spacingAndGlyphs">KBA034-181new 2116</text>
<path d="M536.4,124.5 l5,5 M541.4,124.5 l-5,5" stroke="#2e2e2e" stroke-width="1.35"/>
<path d="M548.0,136 C552.5,136 553.5,118 559.5,117.5 H667 C672,117.5 673.5,122 673.5,125.5 C673.5,130 671,136 669,136 Z" fill="#4f4f4f"/>
<path d="M559.5,118 H667" stroke="#585858" stroke-width="1" stroke-dasharray="1,1"/>
<text x="560.5" y="130.6" font-size="10.4" fill="#c4c4c4" text-anchor="start" font-weight="normal" xml:space="preserve" style="font-family:'Liberation Sans'" textLength="89.5" lengthAdjust="spacingAndGlyphs">KBA034-182 new2116</text>
<path d="M658.0,124.5 l5,5 M663.0,124.5 l-5,5" stroke="#2e2e2e" stroke-width="1.35"/>
<path d="M669.5,136 C674,136 675,118 681,117.5 H794.5 C799.5,117.5 801.0,122 801.0,125.5 C801.0,130 798.5,136 796.5,136 Z" fill="#4f4f4f"/>
<path d="M681,118 H794.5" stroke="#585858" stroke-width="1" stroke-dasharray="1,1"/>
<text x="682" y="130.6" font-size="10.4" fill="#c4c4c4" text-anchor="start" font-weight="normal" xml:space="preserve" style="font-family:'Liberation Sans'" textLength="95.4" lengthAdjust="spacingAndGlyphs">KBA034-183 NEW 2116</text>
<path d="M785.5,124.5 l5,5 M790.5,124.5 l-5,5" stroke="#2e2e2e" stroke-width="1.35"/>
<path d="M797.0,136 C801.5,136 802.5,118 808.5,117.5 H905.7 C910.7,117.5 912.2,122 912.2,125.5 C912.2,130 909.7,136 907.7,136 Z" fill="#4f4f4f"/>
<path d="M808.5,118 H905.7" stroke="#585858" stroke-width="1" stroke-dasharray="1,1"/>
<text x="809.5" y="130.6" font-size="10.4" fill="#c4c4c4" text-anchor="start" font-weight="normal" xml:space="preserve" style="font-family:'Liberation Sans'" textLength="79" lengthAdjust="spacingAndGlyphs">MASTERPLAN TLJ*</text>
<path d="M896.8,124.5 l5,5 M901.8,124.5 l-5,5" stroke="#2e2e2e" stroke-width="1.35"/>
<path d="M908.2,136 C912.7,136 913.7,118 919.7,117.5 H1031 C1036,117.5 1037.5,122 1037.5,125.5 C1037.5,130 1035,136 1033,136 Z" fill="#4f4f4f"/>
<path d="M919.7,118 H1031" stroke="#585858" stroke-width="1" stroke-dasharray="1,1"/>
<text x="920.7" y="130.6" font-size="10.4" fill="#c4c4c4" text-anchor="start" font-weight="normal" xml:space="preserve" style="font-family:'Liberation Sans'" textLength="93.3" lengthAdjust="spacingAndGlyphs">AR.A1-03 DENAH LT.G</text>
<path d="M1022.3,124.5 l5,5 M1027.3,124.5 l-5,5" stroke="#2e2e2e" stroke-width="1.35"/>
<path d="M1033.5,136 C1038,136 1039,118 1045,117.5 H1159.3 C1164.3,117.5 1165.8,122 1165.8,125.5 C1165.8,130 1163.3,136 1161.3,136 Z" fill="#4f4f4f"/>
<path d="M1045,118 H1159.3" stroke="#585858" stroke-width="1" stroke-dasharray="1,1"/>
<text x="1046" y="130.6" font-size="10.4" fill="#c4c4c4" text-anchor="start" font-weight="normal" xml:space="preserve" style="font-family:'Liberation Sans'" textLength="96" lengthAdjust="spacingAndGlyphs">AR.A1-04 DENAH LT.1*</text>
<path d="M1149.9,124.5 l5,5 M1154.9,124.5 l-5,5" stroke="#2e2e2e" stroke-width="1.35"/>
<path d="M1161.8,136 C1166.3,136 1167.3,118 1173.3,117.5 H1287.7 C1292.7,117.5 1294.2,122 1294.2,125.5 C1294.2,130 1291.7,136 1289.7,136 Z" fill="#4f4f4f"/>
<path d="M1173.3,118 H1287.7" stroke="#585858" stroke-width="1" stroke-dasharray="1,1"/>
<text x="1174.3" y="130.6" font-size="10.4" fill="#c4c4c4" text-anchor="start" font-weight="normal" xml:space="preserve" style="font-family:'Liberation Sans'" textLength="95.8" lengthAdjust="spacingAndGlyphs">AR.A1-05 DENAH LT.2*</text>
<path d="M1278.0,124.5 l5,5 M1283.0,124.5 l-5,5" stroke="#2e2e2e" stroke-width="1.35"/>
<path d="M1290.2,136 C1294.7,136 1295.7,118 1301.7,117.5 H1385.8 C1390.8,117.5 1392.3,122 1392.3,125.5 C1392.3,130 1389.8,136 1387.8,136 Z" fill="#4f4f4f"/>
<path d="M1301.7,118 H1385.8" stroke="#585858" stroke-width="1" stroke-dasharray="1,1"/>
<text x="1302.7" y="130.6" font-size="10.4" fill="#c4c4c4" text-anchor="start" font-weight="normal" xml:space="preserve" style="font-family:'Liberation Sans'" textLength="53.3" lengthAdjust="spacingAndGlyphs">Menara 1500</text>
<path d="M1376.5,124.5 l5,5 M1381.5,124.5 l-5,5" stroke="#2e2e2e" stroke-width="1.35"/>
<path d="M1388.3,136 C1392.8,136 1393.8,118 1399.8,117.5 H1484.5 C1489.5,117.5 1491.0,122 1491.0,125.5 C1491.0,130 1488.5,136 1486.5,136 Z" fill="#5c5c5c"/>
<path d="M1399.8,118 H1484.5" stroke="#666" stroke-width="1" stroke-dasharray="1,1"/>
<text x="1400.8" y="130.6" font-size="10.4" fill="#f2f2f2" text-anchor="start" font-weight="normal" xml:space="preserve" style="font-family:'Liberation Sans'" textLength="53.2" lengthAdjust="spacingAndGlyphs">Menara 3200</text>
<path d="M1475.2,124.5 l5,5 M1480.2,124.5 l-5,5" stroke="#3c3c3c" stroke-width="1.35"/>
<path d="M1496,134 q2.5,0 3,-3 l1.5,-7 q0.7,-3 3.5,-3 h6 q3,0 3.5,3 l1.5,7 q0.5,3 3,3z" fill="#4c4c4c"/><path d="M1505,124.5 v6 M1502,127.5 h6" stroke="#ddd" stroke-width="1.4"/>
<path d="M1522,120.5 l3,2.5 l3,-2.5 M1522,124.5 l3,2.5 l3,-2.5" stroke="#ddd" stroke-width="1.1" fill="none"/>
<rect x="0" y="135.5" width="1536" height="2.5" fill="#5a5a5a"/>
</svg>
<svg class="a" style="left:0;top:138px" width="1536" height="665" viewBox="0 138 1536 665">
<rect x="0" y="138" width="1536" height="665" fill="#212830"/>
<rect x="1530" y="138" width="6" height="665" fill="#dce6f1"/>
<rect x="145" y="143" width="943.6" height="656.6" fill="none" stroke="#939598" stroke-width="2"/>
<text x="3" y="152.8" font-size="10.5" fill="#dcdcdc" text-anchor="start" font-weight="normal" xml:space="preserve" style="font-family:'Liberation Sans'" textLength="99" lengthAdjust="spacingAndGlyphs">[−][Top][2D Wireframe]</text>
<path d="M188.7,236.0 L183.9,407.0" stroke="#e6e6e6" stroke-width="1.3" fill="none"/>
<path d="M190.1,236.0 L185.5,407.0" stroke="#9a9a9a" stroke-width="0.5" fill="none"/>
<path d="M195.5,236.0 L200.3,407.0" stroke="#e6e6e6" stroke-width="1.3" fill="none"/>
<path d="M194.1,236.0 L198.7,407.0" stroke="#9a9a9a" stroke-width="0.5" fill="none"/>
<path d="M188.7,236.0 L195.5,236.0" stroke="#e6e6e6" stroke-width="0.9" fill="none"/>
<path d="M188.5,241.8 L195.7,241.8" stroke="#e6e6e6" stroke-width="0.9" fill="none"/>
<path d="M188.4,247.6 L195.8,247.6" stroke="#e6e6e6" stroke-width="0.9" fill="none"/>
<path d="M188.2,253.4 L196.0,253.4" stroke="#e6e6e6" stroke-width="0.9" fill="none"/>
<path d="M188.0,259.2 L196.2,259.2" stroke="#e6e6e6" stroke-width="0.9" fill="none"/>
<path d="M187.9,265.0 L196.3,265.0" stroke="#e6e6e6" stroke-width="0.9" fill="none"/>
<path d="M188.7,236.0 L195.7,241.8" stroke="#e6e6e6" stroke-width="0.8" fill="none"/>
<path d="M195.5,236.0 L188.5,241.8" stroke="#e6e6e6" stroke-width="0.8" fill="none"/>
<path d="M188.5,241.8 L195.8,247.6" stroke="#e6e6e6" stroke-width="0.8" fill="none"/>
<path d="M195.7,241.8 L188.4,247.6" stroke="#e6e6e6" stroke-width="0.8" fill="none"/>
<path d="M188.4,247.6 L196.0,253.4" stroke="#e6e6e6" stroke-width="0.8" fill="none"/>
<path d="M195.8,247.6 L188.2,253.4" stroke="#e6e6e6" stroke-width="0.8" fill="none"/>
<path d="M188.2,253.4 L196.2,259.2" stroke="#e6e6e6" stroke-width="0.8" fill="none"/>
<path d="M196.0,253.4 L188.0,259.2" stroke="#e6e6e6" stroke-width="0.8" fill="none"/>
<path d="M188.0,259.2 L196.3,265.0" stroke="#e6e6e6" stroke-width="0.8" fill="none"/>
<path d="M196.2,259.2 L187.9,265.0" stroke="#e6e6e6" stroke-width="0.8" fill="none"/>
<path d="M187.9,265.0 L196.6,273.7" stroke="#e6e6e6" stroke-width="0.8" fill="none"/>
<path d="M196.3,265.0 L187.6,273.7" stroke="#e6e6e6" stroke-width="0.8" fill="none"/>
<path d="M187.6,273.7 L196.8,282.7" stroke="#e6e6e6" stroke-width="0.8" fill="none"/>
<path d="M196.6,273.7 L187.4,282.7" stroke="#e6e6e6" stroke-width="0.8" fill="none"/>
<path d="M187.4,282.7 L197.0,291.2" stroke="#e6e6e6" stroke-width="0.8" fill="none"/>
<path d="M196.8,282.7 L187.2,291.2" stroke="#e6e6e6" stroke-width="0.8" fill="none"/>
<path d="M187.2,291.2 L197.3,301.0" stroke="#e6e6e6" stroke-width="0.8" fill="none"/>
<path d="M197.0,291.2 L186.9,301.0" stroke="#e6e6e6" stroke-width="0.8" fill="none"/>
<path d="M186.9,301.0 L197.7,314.5" stroke="#e6e6e6" stroke-width="0.8" fill="none"/>
<path d="M197.3,301.0 L186.5,314.5" stroke="#e6e6e6" stroke-width="0.8" fill="none"/>
<path d="M186.5,314.5 L198.1,329.0" stroke="#e6e6e6" stroke-width="0.8" fill="none"/>
<path d="M197.7,314.5 L186.1,329.0" stroke="#e6e6e6" stroke-width="0.8" fill="none"/>
<path d="M186.1,329.0 L198.5,343.6" stroke="#e6e6e6" stroke-width="0.8" fill="none"/>
<path d="M198.1,329.0 L185.7,343.6" stroke="#e6e6e6" stroke-width="0.8" fill="none"/>
<path d="M185.7,343.6 L198.9,358.0" stroke="#e6e6e6" stroke-width="0.8" fill="none"/>
<path d="M198.5,343.6 L185.3,358.0" stroke="#e6e6e6" stroke-width="0.8" fill="none"/>
<path d="M187.8,269.4 L196.4,269.4" stroke="#b8b8b8" stroke-width="0.6" fill="none"/>
<path d="M187.5,278.2 L196.7,278.2" stroke="#b8b8b8" stroke-width="0.6" fill="none"/>
<path d="M187.3,286.9 L196.9,286.9" stroke="#b8b8b8" stroke-width="0.6" fill="none"/>
<path d="M187.0,296.1 L197.2,296.1" stroke="#b8b8b8" stroke-width="0.6" fill="none"/>
<path d="M186.7,307.8 L197.5,307.8" stroke="#b8b8b8" stroke-width="0.6" fill="none"/>
<path d="M186.3,321.8 L197.9,321.8" stroke="#b8b8b8" stroke-width="0.6" fill="none"/>
<path d="M185.9,336.3 L198.3,336.3" stroke="#b8b8b8" stroke-width="0.6" fill="none"/>
<path d="M185.5,350.8 L198.7,350.8" stroke="#b8b8b8" stroke-width="0.6" fill="none"/>
<path d="M185.3,358.0 L198.9,358.0" stroke="#e6e6e6" stroke-width="0.9" fill="none"/>
<path d="M184.7,379.0 L192.1,358.0 L199.5,379.0" stroke="#e6e6e6" stroke-width="0.9" fill="none"/>
<path d="M184.7,379.0 L199.5,379.0" stroke="#e6e6e6" stroke-width="0.9" fill="none"/>
<path d="M185.0,368.5 L188.9,379.0" stroke="#e6e6e6" stroke-width="0.6" fill="none"/>
<path d="M199.2,368.5 L195.3,379.0" stroke="#e6e6e6" stroke-width="0.6" fill="none"/>
<path d="M184.1,398.6 L192.1,379.0 L200.1,398.6" stroke="#e6e6e6" stroke-width="0.9" fill="none"/>
<path d="M184.1,398.6 L200.1,398.6" stroke="#e6e6e6" stroke-width="0.9" fill="none"/>
<path d="M184.4,388.8 L188.6,398.6" stroke="#e6e6e6" stroke-width="0.6" fill="none"/>
<path d="M199.8,388.8 L195.6,398.6" stroke="#e6e6e6" stroke-width="0.6" fill="none"/>
<path d="M184.1,398.6 L192.1,407.0 L200.1,398.6" stroke="#e6e6e6" stroke-width="0.7" fill="none"/>
<path d="M195.6,227.0 L195.6,236.0" stroke="#e6e6e6" stroke-width="1.1" fill="none"/>
<path d="M198.4,236.5 L227.4,236.5" stroke="#e6e6e6" stroke-width="1.1" fill="none"/>
<path d="M229.2,236.5 L260.0,236.5" stroke="#e6e6e6" stroke-width="1.1" fill="none"/>
<path d="M243.4,222.5 L243.4,431.0" stroke="#e6e6e6" stroke-width="1.1" fill="none"/>
<path d="M240.4,233.5 h6 l-3,3z" fill="#e6e6e6"/>
<text x="244.9" y="233" font-size="5" fill="#ddd" text-anchor="start" font-weight="normal" xml:space="preserve" style="font-family:'Liberation Sans'">+32.00</text>
<path d="M229.4,410.2 L259.9,410.2" stroke="#e6e6e6" stroke-width="0.9" fill="none"/>
<path d="M240.4,407.2 h6 l-3,3z" fill="#e6e6e6"/>
<text x="247.4" y="407.7" font-size="5" fill="#ccc" text-anchor="start" font-weight="normal" xml:space="preserve" style="font-family:'Liberation Sans'">+2.20</text>
<path d="M229.4,423.4 L259.9,423.4" stroke="#e6e6e6" stroke-width="0.9" fill="none"/>
<path d="M240.4,420.4 h6 l-3,3z" fill="#e6e6e6"/>
<text x="247.4" y="420.9" font-size="5" fill="#ccc" text-anchor="start" font-weight="normal" xml:space="preserve" style="font-family:'Liberation Sans'">±0.00</text>
<path d="M197.0,332.0 L216.0,332.0" stroke="#e6e6e6" stroke-width="0.9" fill="none"/>
<path d="M198.0,357.6 L216.0,357.6" stroke="#e6e6e6" stroke-width="0.9" fill="none"/>
<rect x="217.8" y="327.6" width="17.9" height="3.9" fill="#f8f8f8"/>
<rect x="217.8" y="332.4" width="15.2" height="3.2" fill="#f8f8f8"/>
<rect x="218.0" y="352.3" width="23.8" height="3.7" fill="#f8f8f8"/>
<rect x="218.0" y="357.0" width="8.8" height="4.0" fill="#f8f8f8"/>
<rect x="217.8" y="383.3" width="10.9" height="4.0" fill="#f8f8f8"/>
<rect x="231.4" y="383.3" width="7.3" height="4.0" fill="#f8f8f8"/>
<rect x="162.0" y="396.0" width="4.6" height="6.0" fill="#f8f8f8"/>
<rect x="162.0" y="412.5" width="4.6" height="8.0" fill="#f8f8f8"/>
<path d="M205.0,407.0 L205.0,386.0 L215.8,386.0" stroke="#e6e6e6" stroke-width="0.9" fill="none"/>
<path d="M157.3,408.0 L157.3,428.0" stroke="#e6e6e6" stroke-width="1.1" fill="none"/>
<path d="M226.5,408.0 L226.5,428.0" stroke="#e6e6e6" stroke-width="1.1" fill="none"/>
<rect x="175" y="408" width="43.5" height="14" fill="none" stroke="#e6e6e6" stroke-width="1"/>
<rect x="186" y="403" width="12.5" height="18" fill="none" stroke="#e6e6e6" stroke-width="1.2"/>
<path d="M166.0,403.0 L166.0,408.0 L175.0,408.0" stroke="#e6e6e6" stroke-width="0.6" fill="none"/>
<rect x="157.3" y="422.0" width="69.2" height="4.5" fill="#cfcfcf"/>
<path d="M175.0,437.8 L218.5,437.8" stroke="#e6e6e6" stroke-width="0.8" fill="none"/>
<path d="M175.0,446.5 L218.5,446.5" stroke="#e6e6e6" stroke-width="0.8" fill="none"/>
<path d="M175.0,427.0 L175.0,448.0" stroke="#bbb" stroke-width="0.6" fill="none"/>
<path d="M183.5,427.0 L183.5,448.0" stroke="#bbb" stroke-width="0.6" fill="none"/>
<path d="M198.5,427.0 L198.5,448.0" stroke="#bbb" stroke-width="0.6" fill="none"/>
<path d="M218.5,427.0 L218.5,448.0" stroke="#bbb" stroke-width="0.6" fill="none"/>
<rect x="175.0" y="432.5" width="8.0" height="3.3" fill="#f8f8f8"/>
<rect x="186.6" y="432.5" width="8.4" height="3.3" fill="#f8f8f8"/>
<rect x="204.0" y="432.5" width="9.0" height="3.3" fill="#f8f8f8"/>
<rect x="192.0" y="441.0" width="9.0" height="3.3" fill="#f8f8f8"/>
<circle cx="174.6" cy="468" r="5.5" fill="none" stroke="#e6e6e6" stroke-width="1"/>
<path d="M165.0,468.0 L250.0,468.0" stroke="#cfcfcf" stroke-width="1" fill="none"/>
<text x="184.4" y="465.7" font-size="8" fill="#d4d4d4" text-anchor="start" font-weight="normal" xml:space="preserve" style="font-family:'Liberation Sans'" textLength="56" lengthAdjust="spacingAndGlyphs">POTONGAN A-A</text>
<rect x="185.0" y="469.0" width="10.0" height="3.0" fill="#f8f8f8"/>
<rect x="197.0" y="469.0" width="10.5" height="3.0" fill="#f8f8f8"/>
<path d="M482.2,236.0 L477.4,407.0" stroke="#e6e6e6" stroke-width="1.3" fill="none"/>
<path d="M483.6,236.0 L479.0,407.0" stroke="#9a9a9a" stroke-width="0.5" fill="none"/>
<path d="M489.0,236.0 L493.8,407.0" stroke="#e6e6e6" stroke-width="1.3" fill="none"/>
<path d="M487.6,236.0 L492.2,407.0" stroke="#9a9a9a" stroke-width="0.5" fill="none"/>
<path d="M482.2,236.0 L489.0,236.0" stroke="#e6e6e6" stroke-width="0.9" fill="none"/>
<path d="M482.0,241.8 L489.2,241.8" stroke="#e6e6e6" stroke-width="0.9" fill="none"/>
<path d="M481.9,247.6 L489.3,247.6" stroke="#e6e6e6" stroke-width="0.9" fill="none"/>
<path d="M481.7,253.4 L489.5,253.4" stroke="#e6e6e6" stroke-width="0.9" fill="none"/>
<path d="M481.5,259.2 L489.7,259.2" stroke="#e6e6e6" stroke-width="0.9" fill="none"/>
<path d="M481.4,265.0 L489.8,265.0" stroke="#e6e6e6" stroke-width="0.9" fill="none"/>
<path d="M482.2,236.0 L489.2,241.8" stroke="#e6e6e6" stroke-width="0.8" fill="none"/>
<path d="M489.0,236.0 L482.0,241.8" stroke="#e6e6e6" stroke-width="0.8" fill="none"/>
<path d="M482.0,241.8 L489.3,247.6" stroke="#e6e6e6" stroke-width="0.8" fill="none"/>
<path d="M489.2,241.8 L481.9,247.6" stroke="#e6e6e6" stroke-width="0.8" fill="none"/>
<path d="M481.9,247.6 L489.5,253.4" stroke="#e6e6e6" stroke-width="0.8" fill="none"/>
<path d="M489.3,247.6 L481.7,253.4" stroke="#e6e6e6" stroke-width="0.8" fill="none"/>
<path d="M481.7,253.4 L489.7,259.2" stroke="#e6e6e6" stroke-width="0.8" fill="none"/>
<path d="M489.5,253.4 L481.5,259.2" stroke="#e6e6e6" stroke-width="0.8" fill="none"/>
<path d="M481.5,259.2 L489.8,265.0" stroke="#e6e6e6" stroke-width="0.8" fill="none"/>
<path d="M489.7,259.2 L481.4,265.0" stroke="#e6e6e6" stroke-width="0.8" fill="none"/>
<path d="M481.4,265.0 L490.1,273.7" stroke="#e6e6e6" stroke-width="0.8" fill="none"/>
<path d="M489.8,265.0 L481.1,273.7" stroke="#e6e6e6" stroke-width="0.8" fill="none"/>
<path d="M481.1,273.7 L490.3,282.7" stroke="#e6e6e6" stroke-width="0.8" fill="none"/>
<path d="M490.1,273.7 L480.9,282.7" stroke="#e6e6e6" stroke-width="0.8" fill="none"/>
<path d="M480.9,282.7 L490.5,291.2" stroke="#e6e6e6" stroke-width="0.8" fill="none"/>
<path d="M490.3,282.7 L480.7,291.2" stroke="#e6e6e6" stroke-width="0.8" fill="none"/>
<path d="M480.7,291.2 L490.8,301.0" stroke="#e6e6e6" stroke-width="0.8" fill="none"/>
<path d="M490.5,291.2 L480.4,301.0" stroke="#e6e6e6" stroke-width="0.8" fill="none"/>
<path d="M480.4,301.0 L491.2,314.5" stroke="#e6e6e6" stroke-width="0.8" fill="none"/>
<path d="M490.8,301.0 L480.0,314.5" stroke="#e6e6e6" stroke-width="0.8" fill="none"/>
<path d="M480.0,314.5 L491.6,329.0" stroke="#e6e6e6" stroke-width="0.8" fill="none"/>
<path d="M491.2,314.5 L479.6,329.0" stroke="#e6e6e6" stroke-width="0.8" fill="none"/>
<path d="M479.6,329.0 L492.0,343.6" stroke="#e6e6e6" stroke-width="0.8" fill="none"/>
<path d="M491.6,329.0 L479.2,343.6" stroke="#e6e6e6" stroke-width="0.8" fill="none"/>
<path d="M479.2,343.6 L492.4,358.0" stroke="#e6e6e6" stroke-width="0.8" fill="none"/>
<path d="M492.0,343.6 L478.8,358.0" stroke="#e6e6e6" stroke-width="0.8" fill="none"/>
<path d="M481.3,269.4 L489.9,269.4" stroke="#b8b8b8" stroke-width="0.6" fill="none"/>
<path d="M481.0,278.2 L490.2,278.2" stroke="#b8b8b8" stroke-width="0.6" fill="none"/>
<path d="M480.8,286.9 L490.4,286.9" stroke="#b8b8b8" stroke-width="0.6" fill="none"/>
<path d="M480.5,296.1 L490.7,296.1" stroke="#b8b8b8" stroke-width="0.6" fill="none"/>
<path d="M480.2,307.8 L491.0,307.8" stroke="#b8b8b8" stroke-width="0.6" fill="none"/>
<path d="M479.8,321.8 L491.4,321.8" stroke="#b8b8b8" stroke-width="0.6" fill="none"/>
<path d="M479.4,336.3 L491.8,336.3" stroke="#b8b8b8" stroke-width="0.6" fill="none"/>
<path d="M479.0,350.8 L492.2,350.8" stroke="#b8b8b8" stroke-width="0.6" fill="none"/>
<path d="M478.8,358.0 L492.4,358.0" stroke="#e6e6e6" stroke-width="0.9" fill="none"/>
<path d="M478.2,379.0 L485.6,358.0 L493.0,379.0" stroke="#e6e6e6" stroke-width="0.9" fill="none"/>
<path d="M478.2,379.0 L493.0,379.0" stroke="#e6e6e6" stroke-width="0.9" fill="none"/>
<path d="M478.5,368.5 L482.4,379.0" stroke="#e6e6e6" stroke-width="0.6" fill="none"/>
<path d="M492.7,368.5 L488.8,379.0" stroke="#e6e6e6" stroke-width="0.6" fill="none"/>
<path d="M477.6,398.6 L485.6,379.0 L493.6,398.6" stroke="#e6e6e6" stroke-width="0.9" fill="none"/>
<path d="M477.6,398.6 L493.6,398.6" stroke="#e6e6e6" stroke-width="0.9" fill="none"/>
<path d="M477.9,388.8 L482.1,398.6" stroke="#e6e6e6" stroke-width="0.6" fill="none"/>
<path d="M493.3,388.8 L489.1,398.6" stroke="#e6e6e6" stroke-width="0.6" fill="none"/>
<path d="M477.6,398.6 L485.6,407.0 L493.6,398.6" stroke="#e6e6e6" stroke-width="0.7" fill="none"/>
<path d="M489.1,227.0 L489.1,236.0" stroke="#e6e6e6" stroke-width="1.1" fill="none"/>
<path d="M491.6,236.5 L519.4,236.5" stroke="#e6e6e6" stroke-width="1.1" fill="none"/>
<path d="M521.2,236.5 L550.7,236.5" stroke="#e6e6e6" stroke-width="1.1" fill="none"/>
<path d="M535.0,222.5 L535.0,431.0" stroke="#e6e6e6" stroke-width="1.1" fill="none"/>
<path d="M532,233.5 h6 l-3,3z" fill="#e6e6e6"/>
<text x="536.5" y="233" font-size="5" fill="#ddd" text-anchor="start" font-weight="normal" xml:space="preserve" style="font-family:'Liberation Sans'">+32.00</text>
<path d="M521.0,410.2 L551.5,410.2" stroke="#e6e6e6" stroke-width="0.9" fill="none"/>
<path d="M532,407.2 h6 l-3,3z" fill="#e6e6e6"/>
<text x="539" y="407.7" font-size="5" fill="#ccc" text-anchor="start" font-weight="normal" xml:space="preserve" style="font-family:'Liberation Sans'">+2.20</text>
<path d="M521.0,423.4 L551.5,423.4" stroke="#e6e6e6" stroke-width="0.9" fill="none"/>
<path d="M532,420.4 h6 l-3,3z" fill="#e6e6e6"/>
<text x="539" y="420.9" font-size="5" fill="#ccc" text-anchor="start" font-weight="normal" xml:space="preserve" style="font-family:'Liberation Sans'">±0.00</text>
<path d="M463.5,332.0 L481.0,332.0" stroke="#e6e6e6" stroke-width="0.9" fill="none"/>
<path d="M463.5,357.6 L480.0,357.6" stroke="#e6e6e6" stroke-width="0.9" fill="none"/>
<rect x="444.0" y="327.6" width="19.5" height="3.9" fill="#f8f8f8"/>
<rect x="446.0" y="332.5" width="17.5" height="3.5" fill="#f8f8f8"/>
<rect x="437.4" y="352.0" width="26.1" height="4.0" fill="#f8f8f8"/>
<rect x="452.0" y="357.0" width="11.5" height="4.0" fill="#f8f8f8"/>
<rect x="440.0" y="383.3" width="12.0" height="4.0" fill="#f8f8f8"/>
<rect x="454.0" y="383.3" width="7.0" height="4.0" fill="#f8f8f8"/>
<rect x="508.8" y="395.0" width="3.7" height="6.0" fill="#f8f8f8"/>
<rect x="508.8" y="411.0" width="3.7" height="9.0" fill="#f8f8f8"/>
<path d="M472.4,407.0 L472.4,386.0 L462.0,386.0" stroke="#e6e6e6" stroke-width="0.9" fill="none"/>
<path d="M267.3,407.3 L267.3,444.7" stroke="#e6e6e6" stroke-width="1.1" fill="none"/>
<path d="M267.3,425.6 L281.9,425.6" stroke="#e6e6e6" stroke-width="0.9" fill="none"/>
<path d="M268.0,440.0 L281.9,423.0" stroke="#e6e6e6" stroke-width="1" fill="none"/>
<path d="M517.0,407.0 L517.0,430.0" stroke="#e6e6e6" stroke-width="1.1" fill="none"/>
<rect x="445.6" y="407" width="58.7" height="16" fill="none" stroke="#e6e6e6" stroke-width="0.9"/>
<rect x="451" y="403" width="13.5" height="20" fill="none" stroke="#e6e6e6" stroke-width="1.1"/><rect x="453.5" y="406" width="8.5" height="16" fill="none" stroke="#e6e6e6" stroke-width="0.8"/>
<path d="M466.0,408.0 L466.0,416.0" stroke="#999" stroke-width="0.6" fill="none"/>
<path d="M469.0,408.0 L469.0,416.0" stroke="#999" stroke-width="0.6" fill="none"/>
<path d="M472.0,408.0 L472.0,416.0" stroke="#999" stroke-width="0.6" fill="none"/>
<path d="M475.0,408.0 L475.0,416.0" stroke="#999" stroke-width="0.6" fill="none"/>
<path d="M478.0,408.0 L478.0,416.0" stroke="#999" stroke-width="0.6" fill="none"/>
<path d="M481.0,408.0 L481.0,416.0" stroke="#999" stroke-width="0.6" fill="none"/>
<path d="M484.0,408.0 L484.0,416.0" stroke="#999" stroke-width="0.6" fill="none"/>
<path d="M487.0,408.0 L487.0,416.0" stroke="#999" stroke-width="0.6" fill="none"/>
<path d="M490.0,408.0 L490.0,416.0" stroke="#999" stroke-width="0.6" fill="none"/>
<path d="M493.0,408.0 L493.0,416.0" stroke="#999" stroke-width="0.6" fill="none"/>
<path d="M496.0,408.0 L496.0,416.0" stroke="#999" stroke-width="0.6" fill="none"/>
<path d="M499.0,408.0 L499.0,416.0" stroke="#999" stroke-width="0.6" fill="none"/>
<path d="M445.6,409.0 L504.3,409.0" stroke="#ccc" stroke-width="1.3" fill="none"/>
<rect x="281.9" y="422.8" width="235.1" height="3.7" fill="#f8f8f8"/>
<path d="M294.6,446.5 L504.3,446.5" stroke="#e6e6e6" stroke-width="0.8" fill="none"/>
<path d="M445.6,437.4 L504.3,437.4" stroke="#e6e6e6" stroke-width="0.8" fill="none"/>
<path d="M294.6,427.0 L294.6,448.0" stroke="#bbb" stroke-width="0.6" fill="none"/>
<path d="M398.9,427.0 L398.9,448.0" stroke="#bbb" stroke-width="0.6" fill="none"/>
<path d="M445.6,427.0 L445.6,448.0" stroke="#bbb" stroke-width="0.6" fill="none"/>
<path d="M464.5,427.0 L464.5,448.0" stroke="#bbb" stroke-width="0.6" fill="none"/>
<path d="M476.0,427.0 L476.0,448.0" stroke="#bbb" stroke-width="0.6" fill="none"/>
<path d="M494.5,427.0 L494.5,448.0" stroke="#bbb" stroke-width="0.6" fill="none"/>
<path d="M504.3,427.0 L504.3,448.0" stroke="#bbb" stroke-width="0.6" fill="none"/>
<rect x="342.0" y="443.0" width="10.0" height="3.0" fill="#f8f8f8"/>
<rect x="419.0" y="443.0" width="8.0" height="3.0" fill="#f8f8f8"/>
<rect x="469.0" y="443.0" width="11.0" height="3.0" fill="#f8f8f8"/>
<rect x="451.0" y="432.5" width="9.0" height="3.5" fill="#f8f8f8"/>
<rect x="466.0" y="432.5" width="8.5" height="3.5" fill="#f8f8f8"/>
<rect x="481.0" y="432.5" width="9.0" height="3.5" fill="#f8f8f8"/>
<rect x="495.0" y="432.5" width="9.0" height="3.5" fill="#f8f8f8"/>
<circle cx="293.6" cy="468.2" r="5.5" fill="none" stroke="#e6e6e6" stroke-width="1"/>
<path d="M285.4,468.2 L368.8,468.2" stroke="#cfcfcf" stroke-width="1" fill="none"/>
<text x="303.4" y="465.9" font-size="8" fill="#d4d4d4" text-anchor="start" font-weight="normal" xml:space="preserve" style="font-family:'Liberation Sans'" textLength="55.7" lengthAdjust="spacingAndGlyphs">POTONGAN B-B</text>
<rect x="304.4" y="469.2" width="10.0" height="3.0" fill="#f8f8f8"/>
<rect x="316.4" y="469.2" width="10.5" height="3.0" fill="#f8f8f8"/>
<path d="M595.6,236.0 L590.8,407.0" stroke="#e6e6e6" stroke-width="1.3" fill="none"/>
<path d="M597.0,236.0 L592.4,407.0" stroke="#9a9a9a" stroke-width="0.5" fill="none"/>
<path d="M602.4,236.0 L607.2,407.0" stroke="#e6e6e6" stroke-width="1.3" fill="none"/>
<path d="M601.0,236.0 L605.6,407.0" stroke="#9a9a9a" stroke-width="0.5" fill="none"/>
<path d="M595.6,236.0 L602.4,236.0" stroke="#e6e6e6" stroke-width="0.9" fill="none"/>
<path d="M595.4,241.8 L602.6,241.8" stroke="#e6e6e6" stroke-width="0.9" fill="none"/>
<path d="M595.3,247.6 L602.7,247.6" stroke="#e6e6e6" stroke-width="0.9" fill="none"/>
<path d="M595.1,253.4 L602.9,253.4" stroke="#e6e6e6" stroke-width="0.9" fill="none"/>
<path d="M594.9,259.2 L603.1,259.2" stroke="#e6e6e6" stroke-width="0.9" fill="none"/>
<path d="M594.8,265.0 L603.2,265.0" stroke="#e6e6e6" stroke-width="0.9" fill="none"/>
<path d="M595.6,236.0 L602.6,241.8" stroke="#e6e6e6" stroke-width="0.8" fill="none"/>
<path d="M602.4,236.0 L595.4,241.8" stroke="#e6e6e6" stroke-width="0.8" fill="none"/>
<path d="M595.4,241.8 L602.7,247.6" stroke="#e6e6e6" stroke-width="0.8" fill="none"/>
<path d="M602.6,241.8 L595.3,247.6" stroke="#e6e6e6" stroke-width="0.8" fill="none"/>
<path d="M595.3,247.6 L602.9,253.4" stroke="#e6e6e6" stroke-width="0.8" fill="none"/>
<path d="M602.7,247.6 L595.1,253.4" stroke="#e6e6e6" stroke-width="0.8" fill="none"/>
<path d="M595.1,253.4 L603.1,259.2" stroke="#e6e6e6" stroke-width="0.8" fill="none"/>
<path d="M602.9,253.4 L594.9,259.2" stroke="#e6e6e6" stroke-width="0.8" fill="none"/>
<path d="M594.9,259.2 L603.2,265.0" stroke="#e6e6e6" stroke-width="0.8" fill="none"/>
<path d="M603.1,259.2 L594.8,265.0" stroke="#e6e6e6" stroke-width="0.8" fill="none"/>
<path d="M594.8,265.0 L603.5,273.7" stroke="#e6e6e6" stroke-width="0.8" fill="none"/>
<path d="M603.2,265.0 L594.5,273.7" stroke="#e6e6e6" stroke-width="0.8" fill="none"/>
<path d="M594.5,273.7 L603.7,282.7" stroke="#e6e6e6" stroke-width="0.8" fill="none"/>
<path d="M603.5,273.7 L594.3,282.7" stroke="#e6e6e6" stroke-width="0.8" fill="none"/>
<path d="M594.3,282.7 L603.9,291.2" stroke="#e6e6e6" stroke-width="0.8" fill="none"/>
<path d="M603.7,282.7 L594.1,291.2" stroke="#e6e6e6" stroke-width="0.8" fill="none"/>
<path d="M594.1,291.2 L604.2,301.0" stroke="#e6e6e6" stroke-width="0.8" fill="none"/>
<path d="M603.9,291.2 L593.8,301.0" stroke="#e6e6e6" stroke-width="0.8" fill="none"/>
<path d="M593.8,301.0 L604.6,314.5" stroke="#e6e6e6" stroke-width="0.8" fill="none"/>
<path d="M604.2,301.0 L593.4,314.5" stroke="#e6e6e6" stroke-width="0.8" fill="none"/>
<path d="M593.4,314.5 L605.0,329.0" stroke="#e6e6e6" stroke-width="0.8" fill="none"/>
<path d="M604.6,314.5 L593.0,329.0" stroke="#e6e6e6" stroke-width="0.8" fill="none"/>
<path d="M593.0,329.0 L605.4,343.6" stroke="#e6e6e6" stroke-width="0.8" fill="none"/>
<path d="M605.0,329.0 L592.6,343.6" stroke="#e6e6e6" stroke-width="0.8" fill="none"/>
<path d="M592.6,343.6 L605.8,358.0" stroke="#e6e6e6" stroke-width="0.8" fill="none"/>
<path d="M605.4,343.6 L592.2,358.0" stroke="#e6e6e6" stroke-width="0.8" fill="none"/>
<path d="M594.7,269.4 L603.3,269.4" stroke="#b8b8b8" stroke-width="0.6" fill="none"/>
<path d="M594.4,278.2 L603.6,278.2" stroke="#b8b8b8" stroke-width="0.6" fill="none"/>
<path d="M594.2,286.9 L603.8,286.9" stroke="#b8b8b8" stroke-width="0.6" fill="none"/>
<path d="M593.9,296.1 L604.1,296.1" stroke="#b8b8b8" stroke-width="0.6" fill="none"/>
<path d="M593.6,307.8 L604.4,307.8" stroke="#b8b8b8" stroke-width="0.6" fill="none"/>
<path d="M593.2,321.8 L604.8,321.8" stroke="#b8b8b8" stroke-width="0.6" fill="none"/>
<path d="M592.8,336.3 L605.2,336.3" stroke="#b8b8b8" stroke-width="0.6" fill="none"/>
<path d="M592.4,350.8 L605.6,350.8" stroke="#b8b8b8" stroke-width="0.6" fill="none"/>
<path d="M592.2,358.0 L605.8,358.0" stroke="#e6e6e6" stroke-width="0.9" fill="none"/>
<path d="M591.6,379.0 L599.0,358.0 L606.4,379.0" stroke="#e6e6e6" stroke-width="0.9" fill="none"/>
<path d="M591.6,379.0 L606.4,379.0" stroke="#e6e6e6" stroke-width="0.9" fill="none"/>
<path d="M591.9,368.5 L595.8,379.0" stroke="#e6e6e6" stroke-width="0.6" fill="none"/>
<path d="M606.1,368.5 L602.2,379.0" stroke="#e6e6e6" stroke-width="0.6" fill="none"/>
<path d="M591.0,398.6 L599.0,379.0 L607.0,398.6" stroke="#e6e6e6" stroke-width="0.9" fill="none"/>
<path d="M591.0,398.6 L607.0,398.6" stroke="#e6e6e6" stroke-width="0.9" fill="none"/>
<path d="M591.3,388.8 L595.5,398.6" stroke="#e6e6e6" stroke-width="0.6" fill="none"/>
<path d="M606.7,388.8 L602.5,398.6" stroke="#e6e6e6" stroke-width="0.6" fill="none"/>
<path d="M591.0,398.6 L599.0,407.0 L607.0,398.6" stroke="#e6e6e6" stroke-width="0.7" fill="none"/>
<path d="M602.5,227.0 L602.5,236.0" stroke="#e6e6e6" stroke-width="1.1" fill="none"/>
<path d="M605.0,236.5 L634.1,236.5" stroke="#e6e6e6" stroke-width="1.1" fill="none"/>
<path d="M636.0,236.5 L667.0,236.5" stroke="#e6e6e6" stroke-width="1.1" fill="none"/>
<path d="M650.5,222.5 L650.5,431.0" stroke="#e6e6e6" stroke-width="1.1" fill="none"/>
<path d="M647.5,233.5 h6 l-3,3z" fill="#e6e6e6"/>
<text x="652.0" y="233" font-size="5" fill="#ddd" text-anchor="start" font-weight="normal" xml:space="preserve" style="font-family:'Liberation Sans'">+32.00</text>
<path d="M636.5,410.2 L667.0,410.2" stroke="#e6e6e6" stroke-width="0.9" fill="none"/>
<path d="M647.5,407.2 h6 l-3,3z" fill="#e6e6e6"/>
<text x="654.5" y="407.7" font-size="5" fill="#ccc" text-anchor="start" font-weight="normal" xml:space="preserve" style="font-family:'Liberation Sans'">+2.20</text>
<path d="M636.5,423.4 L667.0,423.4" stroke="#e6e6e6" stroke-width="0.9" fill="none"/>
<path d="M647.5,420.4 h6 l-3,3z" fill="#e6e6e6"/>
<text x="654.5" y="420.9" font-size="5" fill="#ccc" text-anchor="start" font-weight="normal" xml:space="preserve" style="font-family:'Liberation Sans'">±0.00</text>
<path d="M604.0,332.0 L623.0,332.0" stroke="#e6e6e6" stroke-width="0.9" fill="none"/>
<path d="M604.0,357.6 L623.0,357.6" stroke="#e6e6e6" stroke-width="0.9" fill="none"/>
<rect x="625.0" y="327.6" width="17.0" height="3.9" fill="#f8f8f8"/>
<rect x="625.0" y="332.5" width="15.0" height="3.5" fill="#f8f8f8"/>
<rect x="625.0" y="352.0" width="23.0" height="4.0" fill="#f8f8f8"/>
<rect x="625.0" y="357.0" width="8.0" height="4.0" fill="#f8f8f8"/>
<rect x="624.5" y="383.3" width="12.1" height="4.0" fill="#f8f8f8"/>
<rect x="639.0" y="383.3" width="5.8" height="4.0" fill="#f8f8f8"/>
<rect x="568.6" y="396.0" width="4.3" height="6.0" fill="#f8f8f8"/>
<rect x="568.6" y="412.0" width="4.3" height="8.0" fill="#f8f8f8"/>
<path d="M612.0,407.0 L612.0,386.0 L623.0,386.0" stroke="#e6e6e6" stroke-width="0.9" fill="none"/>
<path d="M563.0,407.0 L563.0,428.0" stroke="#e6e6e6" stroke-width="1.1" fill="none"/>
<path d="M633.3,407.0 L633.3,428.0" stroke="#e6e6e6" stroke-width="1.1" fill="none"/>
<rect x="581.5" y="407" width="43.7" height="15.5" fill="#b0b2b4" stroke="#e6e6e6" stroke-width="1"/>
<rect x="583.0" y="418.0" width="27.0" height="4.0" fill="#2a2f36"/>
<path d="M584.0,409.0 L584.0,417.0" stroke="#888" stroke-width="0.5" fill="none"/>
<path d="M587.0,409.0 L587.0,417.0" stroke="#888" stroke-width="0.5" fill="none"/>
<path d="M590.0,409.0 L590.0,417.0" stroke="#888" stroke-width="0.5" fill="none"/>
<path d="M593.0,409.0 L593.0,417.0" stroke="#888" stroke-width="0.5" fill="none"/>
<path d="M596.0,409.0 L596.0,417.0" stroke="#888" stroke-width="0.5" fill="none"/>
<path d="M599.0,409.0 L599.0,417.0" stroke="#888" stroke-width="0.5" fill="none"/>
<path d="M602.0,409.0 L602.0,417.0" stroke="#888" stroke-width="0.5" fill="none"/>
<path d="M605.0,409.0 L605.0,417.0" stroke="#888" stroke-width="0.5" fill="none"/>
<path d="M608.0,409.0 L608.0,417.0" stroke="#888" stroke-width="0.5" fill="none"/>
<path d="M611.0,409.0 L611.0,417.0" stroke="#888" stroke-width="0.5" fill="none"/>
<path d="M614.0,409.0 L614.0,417.0" stroke="#888" stroke-width="0.5" fill="none"/>
<path d="M617.0,409.0 L617.0,417.0" stroke="#888" stroke-width="0.5" fill="none"/>
<path d="M620.0,409.0 L620.0,417.0" stroke="#888" stroke-width="0.5" fill="none"/>
<path d="M623.0,409.0 L623.0,417.0" stroke="#888" stroke-width="0.5" fill="none"/>
<path d="M581.0,409.0 L625.0,409.0" stroke="#ddd" stroke-width="1.2" fill="none"/>
<rect x="563.0" y="422.0" width="70.3" height="4.0" fill="#cfcfcf"/>
<path d="M581.0,437.5 L637.0,437.5" stroke="#e6e6e6" stroke-width="0.8" fill="none"/>
<path d="M581.0,446.5 L625.0,446.5" stroke="#e6e6e6" stroke-width="0.8" fill="none"/>
<path d="M581.0,427.0 L581.0,448.0" stroke="#bbb" stroke-width="0.6" fill="none"/>
<path d="M625.0,427.0 L625.0,448.0" stroke="#bbb" stroke-width="0.6" fill="none"/>
<path d="M610.0,427.0 L610.0,448.0" stroke="#bbb" stroke-width="0.6" fill="none"/>
<rect x="584.3" y="432.5" width="8.7" height="3.5" fill="#f8f8f8"/>
<rect x="612.0" y="432.5" width="9.0" height="3.5" fill="#f8f8f8"/>
<rect x="630.0" y="432.5" width="7.0" height="3.5" fill="#f8f8f8"/>
<rect x="600.0" y="443.0" width="9.0" height="3.0" fill="#f8f8f8"/>
<circle cx="581.7" cy="468" r="5.5" fill="none" stroke="#e6e6e6" stroke-width="1"/>
<path d="M573.0,468.0 L661.0,468.0" stroke="#cfcfcf" stroke-width="1" fill="none"/>
<text x="590.8" y="465.7" font-size="8" fill="#d4d4d4" text-anchor="start" font-weight="normal" xml:space="preserve" style="font-family:'Liberation Sans'" textLength="66" lengthAdjust="spacingAndGlyphs">TAMPAK MUKA (1)</text>
<rect x="592.0" y="469.0" width="10.0" height="3.0" fill="#f8f8f8"/>
<rect x="604.0" y="469.0" width="10.5" height="3.0" fill="#f8f8f8"/>
<path d="M889.1,236.0 L884.3,407.0" stroke="#e6e6e6" stroke-width="1.3" fill="none"/>
<path d="M890.5,236.0 L885.9,407.0" stroke="#9a9a9a" stroke-width="0.5" fill="none"/>
<path d="M895.9,236.0 L900.7,407.0" stroke="#e6e6e6" stroke-width="1.3" fill="none"/>
<path d="M894.5,236.0 L899.1,407.0" stroke="#9a9a9a" stroke-width="0.5" fill="none"/>
<path d="M889.1,236.0 L895.9,236.0" stroke="#e6e6e6" stroke-width="0.9" fill="none"/>
<path d="M888.9,241.8 L896.1,241.8" stroke="#e6e6e6" stroke-width="0.9" fill="none"/>
<path d="M888.8,247.6 L896.2,247.6" stroke="#e6e6e6" stroke-width="0.9" fill="none"/>
<path d="M888.6,253.4 L896.4,253.4" stroke="#e6e6e6" stroke-width="0.9" fill="none"/>
<path d="M888.4,259.2 L896.6,259.2" stroke="#e6e6e6" stroke-width="0.9" fill="none"/>
<path d="M888.3,265.0 L896.7,265.0" stroke="#e6e6e6" stroke-width="0.9" fill="none"/>
<path d="M889.1,236.0 L896.1,241.8" stroke="#e6e6e6" stroke-width="0.8" fill="none"/>
<path d="M895.9,236.0 L888.9,241.8" stroke="#e6e6e6" stroke-width="0.8" fill="none"/>
<path d="M888.9,241.8 L896.2,247.6" stroke="#e6e6e6" stroke-width="0.8" fill="none"/>
<path d="M896.1,241.8 L888.8,247.6" stroke="#e6e6e6" stroke-width="0.8" fill="none"/>
<path d="M888.8,247.6 L896.4,253.4" stroke="#e6e6e6" stroke-width="0.8" fill="none"/>
<path d="M896.2,247.6 L888.6,253.4" stroke="#e6e6e6" stroke-width="0.8" fill="none"/>
<path d="M888.6,253.4 L896.6,259.2" stroke="#e6e6e6" stroke-width="0.8" fill="none"/>
<path d="M896.4,253.4 L888.4,259.2" stroke="#e6e6e6" stroke-width="0.8" fill="none"/>
<path d="M888.4,259.2 L896.7,265.0" stroke="#e6e6e6" stroke-width="0.8" fill="none"/>
<path d="M896.6,259.2 L888.3,265.0" stroke="#e6e6e6" stroke-width="0.8" fill="none"/>
<path d="M888.3,265.0 L897.0,273.7" stroke="#e6e6e6" stroke-width="0.8" fill="none"/>
<path d="M896.7,265.0 L888.0,273.7" stroke="#e6e6e6" stroke-width="0.8" fill="none"/>
<path d="M888.0,273.7 L897.2,282.7" stroke="#e6e6e6" stroke-width="0.8" fill="none"/>
<path d="M897.0,273.7 L887.8,282.7" stroke="#e6e6e6" stroke-width="0.8" fill="none"/>
<path d="M887.8,282.7 L897.4,291.2" stroke="#e6e6e6" stroke-width="0.8" fill="none"/>
<path d="M897.2,282.7 L887.6,291.2" stroke="#e6e6e6" stroke-width="0.8" fill="none"/>
<path d="M887.6,291.2 L897.7,301.0" stroke="#e6e6e6" stroke-width="0.8" fill="none"/>
<path d="M897.4,291.2 L887.3,301.0" stroke="#e6e6e6" stroke-width="0.8" fill="none"/>
<path d="M887.3,301.0 L898.1,314.5" stroke="#e6e6e6" stroke-width="0.8" fill="none"/>
<path d="M897.7,301.0 L886.9,314.5" stroke="#e6e6e6" stroke-width="0.8" fill="none"/>
<path d="M886.9,314.5 L898.5,329.0" stroke="#e6e6e6" stroke-width="0.8" fill="none"/>
<path d="M898.1,314.5 L886.5,329.0" stroke="#e6e6e6" stroke-width="0.8" fill="none"/>
<path d="M886.5,329.0 L898.9,343.6" stroke="#e6e6e6" stroke-width="0.8" fill="none"/>
<path d="M898.5,329.0 L886.1,343.6" stroke="#e6e6e6" stroke-width="0.8" fill="none"/>
<path d="M886.1,343.6 L899.3,358.0" stroke="#e6e6e6" stroke-width="0.8" fill="none"/>
<path d="M898.9,343.6 L885.7,358.0" stroke="#e6e6e6" stroke-width="0.8" fill="none"/>
<path d="M888.2,269.4 L896.8,269.4" stroke="#b8b8b8" stroke-width="0.6" fill="none"/>
<path d="M887.9,278.2 L897.1,278.2" stroke="#b8b8b8" stroke-width="0.6" fill="none"/>
<path d="M887.7,286.9 L897.3,286.9" stroke="#b8b8b8" stroke-width="0.6" fill="none"/>
<path d="M887.4,296.1 L897.6,296.1" stroke="#b8b8b8" stroke-width="0.6" fill="none"/>
<path d="M887.1,307.8 L897.9,307.8" stroke="#b8b8b8" stroke-width="0.6" fill="none"/>
<path d="M886.7,321.8 L898.3,321.8" stroke="#b8b8b8" stroke-width="0.6" fill="none"/>
<path d="M886.3,336.3 L898.7,336.3" stroke="#b8b8b8" stroke-width="0.6" fill="none"/>
<path d="M885.9,350.8 L899.1,350.8" stroke="#b8b8b8" stroke-width="0.6" fill="none"/>
<path d="M885.7,358.0 L899.3,358.0" stroke="#e6e6e6" stroke-width="0.9" fill="none"/>
<path d="M885.1,379.0 L892.5,358.0 L899.9,379.0" stroke="#e6e6e6" stroke-width="0.9" fill="none"/>
<path d="M885.1,379.0 L899.9,379.0" stroke="#e6e6e6" stroke-width="0.9" fill="none"/>
<path d="M885.4,368.5 L889.3,379.0" stroke="#e6e6e6" stroke-width="0.6" fill="none"/>
<path d="M899.6,368.5 L895.7,379.0" stroke="#e6e6e6" stroke-width="0.6" fill="none"/>
<path d="M884.5,398.6 L892.5,379.0 L900.5,398.6" stroke="#e6e6e6" stroke-width="0.9" fill="none"/>
<path d="M884.5,398.6 L900.5,398.6" stroke="#e6e6e6" stroke-width="0.9" fill="none"/>
<path d="M884.8,388.8 L889.0,398.6" stroke="#e6e6e6" stroke-width="0.6" fill="none"/>
<path d="M900.2,388.8 L896.0,398.6" stroke="#e6e6e6" stroke-width="0.6" fill="none"/>
<path d="M884.5,398.6 L892.5,407.0 L900.5,398.6" stroke="#e6e6e6" stroke-width="0.7" fill="none"/>
<path d="M896.0,227.0 L896.0,236.0" stroke="#e6e6e6" stroke-width="1.1" fill="none"/>
<path d="M898.0,236.5 L926.2,236.5" stroke="#e6e6e6" stroke-width="1.1" fill="none"/>
<path d="M928.0,236.5 L958.0,236.5" stroke="#e6e6e6" stroke-width="1.1" fill="none"/>
<path d="M941.6,222.5 L941.6,431.0" stroke="#e6e6e6" stroke-width="1.1" fill="none"/>
<path d="M938.6,233.5 h6 l-3,3z" fill="#e6e6e6"/>
<text x="943.1" y="233" font-size="5" fill="#ddd" text-anchor="start" font-weight="normal" xml:space="preserve" style="font-family:'Liberation Sans'">+32.00</text>
<path d="M927.6,410.2 L958.1,410.2" stroke="#e6e6e6" stroke-width="0.9" fill="none"/>
<path d="M938.6,407.2 h6 l-3,3z" fill="#e6e6e6"/>
<text x="945.6" y="407.7" font-size="5" fill="#ccc" text-anchor="start" font-weight="normal" xml:space="preserve" style="font-family:'Liberation Sans'">+2.20</text>
<path d="M927.6,423.4 L958.1,423.4" stroke="#e6e6e6" stroke-width="0.9" fill="none"/>
<path d="M938.6,420.4 h6 l-3,3z" fill="#e6e6e6"/>
<text x="945.6" y="420.9" font-size="5" fill="#ccc" text-anchor="start" font-weight="normal" xml:space="preserve" style="font-family:'Liberation Sans'">±0.00</text>
<path d="M869.0,332.0 L886.0,332.0" stroke="#e6e6e6" stroke-width="0.9" fill="none"/>
<path d="M869.0,357.6 L886.0,357.6" stroke="#e6e6e6" stroke-width="0.9" fill="none"/>
<rect x="850.6" y="327.6" width="17.0" height="3.9" fill="#f8f8f8"/>
<rect x="852.0" y="332.5" width="15.6" height="3.5" fill="#f8f8f8"/>
<rect x="844.0" y="352.0" width="23.6" height="4.0" fill="#f8f8f8"/>
<rect x="859.0" y="357.0" width="8.6" height="4.0" fill="#f8f8f8"/>
<rect x="847.4" y="383.3" width="11.6" height="4.0" fill="#f8f8f8"/>
<rect x="861.6" y="383.3" width="5.4" height="4.0" fill="#f8f8f8"/>
<rect x="915.4" y="395.0" width="4.6" height="6.0" fill="#f8f8f8"/>
<rect x="915.4" y="412.0" width="4.6" height="8.0" fill="#f8f8f8"/>
<path d="M878.4,405.0 L878.4,386.0 L869.0,386.0" stroke="#e6e6e6" stroke-width="0.9" fill="none"/>
<path d="M674.2,407.0 L674.2,444.0" stroke="#e6e6e6" stroke-width="1.1" fill="none"/>
<path d="M674.2,425.6 L687.0,425.6" stroke="#e6e6e6" stroke-width="0.9" fill="none"/>
<path d="M675.0,440.0 L687.0,423.0" stroke="#e6e6e6" stroke-width="1" fill="none"/>
<path d="M924.0,407.0 L924.0,430.0" stroke="#e6e6e6" stroke-width="1.1" fill="none"/>
<rect x="852.3" y="407" width="58.7" height="16" fill="none" stroke="#e6e6e6" stroke-width="0.9"/>
<rect x="852.3" y="405.0" width="58.7" height="4.0" fill="#bfbfbf"/>
<rect x="858.8" y="400.5" width="13" height="4.5" fill="none" stroke="#e6e6e6" stroke-width="0.9"/>
<rect x="687.0" y="422.8" width="237.0" height="3.7" fill="#f8f8f8"/>
<path d="M701.0,446.5 L911.0,446.5" stroke="#e6e6e6" stroke-width="0.8" fill="none"/>
<path d="M701.0,427.0 L701.0,448.0" stroke="#bbb" stroke-width="0.6" fill="none"/>
<path d="M805.6,427.0 L805.6,448.0" stroke="#bbb" stroke-width="0.6" fill="none"/>
<path d="M852.3,427.0 L852.3,448.0" stroke="#bbb" stroke-width="0.6" fill="none"/>
<path d="M911.0,427.0 L911.0,448.0" stroke="#bbb" stroke-width="0.6" fill="none"/>
<rect x="748.4" y="443.0" width="9.6" height="3.0" fill="#f8f8f8"/>
<rect x="826.0" y="443.0" width="10.0" height="3.0" fill="#f8f8f8"/>
<rect x="877.0" y="443.0" width="10.0" height="3.0" fill="#f8f8f8"/>
<circle cx="701" cy="468" r="5.5" fill="none" stroke="#e6e6e6" stroke-width="1"/>
<path d="M690.0,468.0 L792.0,468.0" stroke="#cfcfcf" stroke-width="1" fill="none"/>
<text x="710" y="465.7" font-size="8" fill="#d4d4d4" text-anchor="start" font-weight="normal" xml:space="preserve" style="font-family:'Liberation Sans'" textLength="79" lengthAdjust="spacingAndGlyphs">TAMPAK SAMPING (2)</text>
<rect x="711.0" y="469.0" width="10.0" height="3.0" fill="#f8f8f8"/>
<rect x="723.0" y="469.0" width="10.5" height="3.0" fill="#f8f8f8"/>
<rect x="582" y="538" width="241.3" height="190.6" fill="none" stroke="#a2a4a8" stroke-width="2"/>
<defs><pattern id="dots" width="2" height="2" patternUnits="userSpaceOnUse"><rect width="2" height="2" fill="#b0b3b6"/><rect width="1" height="1" fill="#ececec"/><rect x="1" y="1" width="1" height="1" fill="#dadada"/></pattern></defs>
<rect x="657.2" y="571.2" width="87.1" height="117.4" fill="url(#dots)"/>
<rect x="659.4" y="573.6" width="52.6" height="53.4" fill="#eeeeee"/>
<path d="M659,574h2v1h-2zM662,574h1v1h-1zM664,574h2v1h-2zM667,574h1v1h-1zM669,574h2v1h-2zM673,574h2v1h-2zM678,574h1v1h-1zM680,574h1v1h-1zM682,574h4v1h-4zM687,574h1v1h-1zM690,574h1v1h-1zM692,574h3v1h-3zM697,574h1v1h-1zM700,574h1v1h-1zM703,574h1v1h-1zM708,574h1v1h-1zM710,574h2v1h-2zM660,575h1v1h-1zM662,575h1v1h-1zM667,575h1v1h-1zM676,575h1v1h-1zM681,575h2v1h-2zM684,575h1v1h-1zM686,575h3v1h-3zM690,575h3v1h-3zM694,575h1v1h-1zM700,575h3v1h-3zM705,575h4v1h-4zM711,575h1v1h-1zM659,576h3v1h-3zM668,576h1v1h-1zM673,576h3v1h-3zM677,576h11v1h-11zM690,576h5v1h-5zM699,576h4v1h-4zM704,576h2v1h-2zM708,576h1v1h-1zM710,576h1v1h-1zM662,577h3v1h-3zM668,577h2v1h-2zM676,577h1v1h-1zM678,577h5v1h-5zM689,577h5v1h-5zM700,577h1v1h-1zM706,577h1v1h-1zM708,577h1v1h-1zM711,577h1v1h-1zM659,578h1v1h-1zM662,578h3v1h-3zM667,578h1v1h-1zM671,578h1v1h-1zM673,578h2v1h-2zM682,578h4v1h-4zM687,578h3v1h-3zM691,578h1v1h-1zM700,578h1v1h-1zM702,578h2v1h-2zM705,578h1v1h-1zM709,578h1v1h-1zM660,579h1v1h-1zM662,579h2v1h-2zM681,579h1v1h-1zM685,579h2v1h-2zM688,579h3v1h-3zM694,579h1v1h-1zM697,579h1v1h-1zM700,579h1v1h-1zM702,579h1v1h-1zM706,579h1v1h-1zM709,579h3v1h-3zM660,580h1v1h-1zM663,580h2v1h-2zM667,580h1v1h-1zM671,580h3v1h-3zM675,580h2v1h-2zM680,580h2v1h-2zM685,580h2v1h-2zM689,580h1v1h-1zM693,580h1v1h-1zM695,580h1v1h-1zM698,580h1v1h-1zM701,580h2v1h-2zM704,580h7v1h-7zM659,581h1v1h-1zM661,581h5v1h-5zM668,581h1v1h-1zM671,581h1v1h-1zM676,581h1v1h-1zM680,581h1v1h-1zM684,581h5v1h-5zM690,581h3v1h-3zM696,581h3v1h-3zM700,581h1v1h-1zM702,581h1v1h-1zM706,581h1v1h-1zM708,581h4v1h-4zM661,582h1v1h-1zM663,582h8v1h-8zM677,582h2v1h-2zM680,582h1v1h-1zM683,582h1v1h-1zM689,582h1v1h-1zM699,582h5v1h-5zM710,582h1v1h-1zM663,583h1v1h-1zM665,583h3v1h-3zM669,583h1v1h-1zM673,583h1v1h-1zM679,583h3v1h-3zM683,583h1v1h-1zM685,583h3v1h-3zM691,583h1v1h-1zM695,583h1v1h-1zM697,583h1v1h-1zM700,583h1v1h-1zM705,583h2v1h-2zM708,583h1v1h-1zM710,583h1v1h-1zM660,584h1v1h-1zM665,584h1v1h-1zM668,584h2v1h-2zM672,584h4v1h-4zM677,584h1v1h-1zM680,584h1v1h-1zM684,584h3v1h-3zM689,584h1v1h-1zM691,584h3v1h-3zM695,584h1v1h-1zM697,584h2v1h-2zM700,584h2v1h-2zM710,584h1v1h-1zM662,585h2v1h-2zM665,585h1v1h-1zM667,585h2v1h-2zM671,585h1v1h-1zM673,585h1v1h-1zM675,585h4v1h-4zM681,585h1v1h-1zM685,585h7v1h-7zM695,585h2v1h-2zM698,585h4v1h-4zM703,585h1v1h-1zM707,585h4v1h-4zM662,586h2v1h-2zM668,586h2v1h-2zM674,586h3v1h-3zM685,586h1v1h-1zM687,586h1v1h-1zM690,586h3v1h-3zM695,586h2v1h-2zM699,586h2v1h-2zM702,586h2v1h-2zM709,586h2v1h-2zM660,587h2v1h-2zM665,587h1v1h-1zM668,587h3v1h-3zM673,587h1v1h-1zM677,587h1v1h-1zM679,587h1v1h-1zM681,587h2v1h-2zM684,587h1v1h-1zM687,587h3v1h-3zM692,587h3v1h-3zM696,587h4v1h-4zM705,587h2v1h-2zM709,587h1v1h-1zM711,587h1v1h-1zM659,588h6v1h-6zM666,588h1v1h-1zM668,588h2v1h-2zM673,588h1v1h-1zM675,588h1v1h-1zM677,588h2v1h-2zM680,588h2v1h-2zM684,588h3v1h-3zM688,588h1v1h-1zM691,588h2v1h-2zM695,588h1v1h-1zM697,588h3v1h-3zM704,588h2v1h-2zM709,588h2v1h-2zM661,589h1v1h-1zM667,589h3v1h-3zM671,589h2v1h-2zM674,589h3v1h-3zM678,589h1v1h-1zM682,589h3v1h-3zM688,589h2v1h-2zM695,589h1v1h-1zM697,589h1v1h-1zM699,589h1v1h-1zM701,589h4v1h-4zM707,589h2v1h-2zM711,589h1v1h-1zM662,590h1v1h-1zM667,590h4v1h-4zM674,590h1v1h-1zM677,590h1v1h-1zM680,590h1v1h-1zM683,590h5v1h-5zM690,590h3v1h-3zM694,590h3v1h-3zM699,590h3v1h-3zM704,590h2v1h-2zM707,590h3v1h-3zM711,590h1v1h-1zM660,591h2v1h-2zM664,591h2v1h-2zM667,591h2v1h-2zM672,591h1v1h-1zM675,591h2v1h-2zM680,591h1v1h-1zM682,591h1v1h-1zM684,591h2v1h-2zM688,591h1v1h-1zM692,591h2v1h-2zM697,591h1v1h-1zM699,591h1v1h-1zM703,591h1v1h-1zM705,591h2v1h-2zM709,591h3v1h-3zM660,592h3v1h-3zM665,592h1v1h-1zM668,592h1v1h-1zM670,592h1v1h-1zM674,592h1v1h-1zM681,592h1v1h-1zM684,592h1v1h-1zM688,592h1v1h-1zM690,592h2v1h-2zM693,592h1v1h-1zM696,592h1v1h-1zM698,592h1v1h-1zM702,592h1v1h-1zM704,592h1v1h-1zM706,592h1v1h-1zM711,592h1v1h-1zM663,593h1v1h-1zM666,593h2v1h-2zM669,593h1v1h-1zM671,593h1v1h-1zM673,593h1v1h-1zM676,593h2v1h-2zM679,593h4v1h-4zM686,593h1v1h-1zM688,593h1v1h-1zM691,593h1v1h-1zM696,593h1v1h-1zM699,593h1v1h-1zM701,593h1v1h-1zM704,593h1v1h-1zM707,593h1v1h-1zM709,593h1v1h-1zM711,593h1v1h-1zM663,594h4v1h-4zM671,594h2v1h-2zM674,594h6v1h-6zM682,594h1v1h-1zM685,594h1v1h-1zM687,594h3v1h-3zM693,594h3v1h-3zM698,594h1v1h-1zM703,594h1v1h-1zM705,594h1v1h-1zM707,594h3v1h-3zM711,594h1v1h-1zM661,595h2v1h-2zM667,595h4v1h-4zM674,595h1v1h-1zM680,595h5v1h-5zM689,595h1v1h-1zM694,595h1v1h-1zM697,595h1v1h-1zM699,595h3v1h-3zM705,595h1v1h-1zM707,595h2v1h-2zM668,596h2v1h-2zM671,596h1v1h-1zM673,596h3v1h-3zM677,596h4v1h-4zM685,596h1v1h-1zM687,596h1v1h-1zM691,596h1v1h-1zM695,596h4v1h-4zM704,596h3v1h-3zM708,596h2v1h-2zM711,596h1v1h-1zM659,597h2v1h-2zM662,597h2v1h-2zM668,597h2v1h-2zM672,597h1v1h-1zM675,597h1v1h-1zM677,597h1v1h-1zM679,597h3v1h-3zM684,597h1v1h-1zM688,597h1v1h-1zM690,597h1v1h-1zM692,597h1v1h-1zM694,597h2v1h-2zM698,597h1v1h-1zM700,597h1v1h-1zM705,597h3v1h-3zM709,597h1v1h-1zM711,597h1v1h-1zM659,598h2v1h-2zM663,598h1v1h-1zM665,598h1v1h-1zM671,598h3v1h-3zM677,598h1v1h-1zM681,598h1v1h-1zM684,598h3v1h-3zM689,598h4v1h-4zM694,598h3v1h-3zM699,598h1v1h-1zM701,598h2v1h-2zM707,598h1v1h-1zM709,598h3v1h-3zM659,599h2v1h-2zM666,599h1v1h-1zM668,599h1v1h-1zM675,599h1v1h-1zM684,599h1v1h-1zM686,599h2v1h-2zM691,599h1v1h-1zM695,599h1v1h-1zM698,599h1v1h-1zM701,599h1v1h-1zM704,599h1v1h-1zM706,599h1v1h-1zM710,599h1v1h-1zM665,600h1v1h-1zM667,600h1v1h-1zM669,600h1v1h-1zM671,600h1v1h-1zM673,600h6v1h-6zM681,600h3v1h-3zM687,600h1v1h-1zM689,600h3v1h-3zM697,600h1v1h-1zM699,600h1v1h-1zM704,600h1v1h-1zM706,600h1v1h-1zM708,600h1v1h-1zM710,600h2v1h-2zM659,601h1v1h-1zM661,601h2v1h-2zM664,601h3v1h-3zM671,601h1v1h-1zM674,601h1v1h-1zM678,601h1v1h-1zM681,601h2v1h-2zM685,601h4v1h-4zM690,601h2v1h-2zM694,601h1v1h-1zM702,601h1v1h-1zM709,601h3v1h-3zM660,602h1v1h-1zM662,602h1v1h-1zM667,602h1v1h-1zM673,602h2v1h-2zM676,602h1v1h-1zM679,602h1v1h-1zM683,602h1v1h-1zM688,602h1v1h-1zM691,602h1v1h-1zM693,602h1v1h-1zM697,602h1v1h-1zM702,602h1v1h-1zM704,602h1v1h-1zM706,602h1v1h-1zM711,602h1v1h-1zM659,603h2v1h-2zM664,603h1v1h-1zM668,603h4v1h-4zM683,603h1v1h-1zM687,603h3v1h-3zM693,603h1v1h-1zM697,603h2v1h-2zM700,603h1v1h-1zM704,603h1v1h-1zM706,603h2v1h-2zM659,604h2v1h-2zM665,604h2v1h-2zM668,604h4v1h-4zM673,604h1v1h-1zM675,604h1v1h-1zM677,604h2v1h-2zM680,604h1v1h-1zM682,604h2v1h-2zM688,604h1v1h-1zM693,604h1v1h-1zM696,604h2v1h-2zM700,604h2v1h-2zM703,604h1v1h-1zM706,604h2v1h-2zM711,604h1v1h-1zM660,605h1v1h-1zM663,605h2v1h-2zM669,605h2v1h-2zM674,605h1v1h-1zM679,605h1v1h-1zM682,605h1v1h-1zM687,605h3v1h-3zM694,605h1v1h-1zM699,605h1v1h-1zM704,605h2v1h-2zM708,605h1v1h-1zM711,605h1v1h-1zM662,606h2v1h-2zM667,606h1v1h-1zM670,606h1v1h-1zM677,606h3v1h-3zM681,606h1v1h-1zM683,606h1v1h-1zM685,606h2v1h-2zM688,606h2v1h-2zM692,606h1v1h-1zM694,606h1v1h-1zM696,606h2v1h-2zM702,606h1v1h-1zM709,606h3v1h-3zM659,607h3v1h-3zM667,607h1v1h-1zM669,607h2v1h-2zM672,607h1v1h-1zM677,607h1v1h-1zM679,607h1v1h-1zM682,607h4v1h-4zM689,607h1v1h-1zM694,607h2v1h-2zM699,607h1v1h-1zM702,607h4v1h-4zM707,607h3v1h-3zM711,607h1v1h-1zM660,608h2v1h-2zM663,608h1v1h-1zM667,608h1v1h-1zM669,608h1v1h-1zM674,608h1v1h-1zM678,608h3v1h-3zM683,608h1v1h-1zM685,608h4v1h-4zM690,608h2v1h-2zM693,608h1v1h-1zM695,608h1v1h-1zM697,608h1v1h-1zM700,608h1v1h-1zM702,608h4v1h-4zM709,608h2v1h-2zM659,609h1v1h-1zM661,609h1v1h-1zM663,609h1v1h-1zM665,609h3v1h-3zM670,609h1v1h-1zM673,609h1v1h-1zM675,609h2v1h-2zM679,609h3v1h-3zM684,609h2v1h-2zM690,609h2v1h-2zM693,609h1v1h-1zM695,609h1v1h-1zM697,609h1v1h-1zM701,609h1v1h-1zM705,609h2v1h-2zM708,609h3v1h-3zM659,610h1v1h-1zM663,610h1v1h-1zM667,610h1v1h-1zM669,610h1v1h-1zM671,610h1v1h-1zM678,610h1v1h-1zM680,610h4v1h-4zM685,610h2v1h-2zM688,610h2v1h-2zM694,610h1v1h-1zM697,610h2v1h-2zM701,610h4v1h-4zM707,610h1v1h-1zM710,610h1v1h-1zM660,611h1v1h-1zM664,611h1v1h-1zM667,611h3v1h-3zM676,611h1v1h-1zM680,611h1v1h-1zM683,611h1v1h-1zM685,611h1v1h-1zM688,611h2v1h-2zM697,611h1v1h-1zM699,611h1v1h-1zM701,611h1v1h-1zM705,611h1v1h-1zM709,611h2v1h-2zM659,612h1v1h-1zM663,612h1v1h-1zM666,612h8v1h-8zM679,612h1v1h-1zM685,612h3v1h-3zM689,612h1v1h-1zM691,612h2v1h-2zM694,612h1v1h-1zM697,612h1v1h-1zM699,612h1v1h-1zM701,612h2v1h-2zM705,612h2v1h-2zM709,612h2v1h-2zM660,613h3v1h-3zM675,613h1v1h-1zM677,613h1v1h-1zM683,613h1v1h-1zM687,613h1v1h-1zM691,613h2v1h-2zM694,613h2v1h-2zM700,613h3v1h-3zM705,613h1v1h-1zM707,613h1v1h-1zM711,613h1v1h-1zM661,614h2v1h-2zM672,614h2v1h-2zM675,614h1v1h-1zM679,614h3v1h-3zM690,614h1v1h-1zM693,614h2v1h-2zM698,614h1v1h-1zM705,614h2v1h-2zM709,614h2v1h-2zM660,615h1v1h-1zM663,615h2v1h-2zM666,615h1v1h-1zM668,615h2v1h-2zM673,615h1v1h-1zM676,615h1v1h-1zM681,615h3v1h-3zM685,615h3v1h-3zM692,615h2v1h-2zM695,615h1v1h-1zM697,615h4v1h-4zM703,615h1v1h-1zM705,615h2v1h-2zM659,616h2v1h-2zM663,616h1v1h-1zM666,616h1v1h-1zM671,616h2v1h-2zM674,616h2v1h-2zM679,616h4v1h-4zM684,616h1v1h-1zM686,616h1v1h-1zM688,616h4v1h-4zM693,616h6v1h-6zM700,616h2v1h-2zM703,616h2v1h-2zM706,616h1v1h-1zM710,616h2v1h-2zM660,617h1v1h-1zM662,617h1v1h-1zM665,617h1v1h-1zM667,617h1v1h-1zM669,617h1v1h-1zM672,617h2v1h-2zM675,617h1v1h-1zM677,617h1v1h-1zM680,617h1v1h-1zM682,617h1v1h-1zM685,617h4v1h-4zM690,617h1v1h-1zM692,617h1v1h-1zM694,617h1v1h-1zM696,617h5v1h-5zM702,617h2v1h-2zM708,617h3v1h-3zM660,618h2v1h-2zM664,618h1v1h-1zM666,618h1v1h-1zM668,618h2v1h-2zM673,618h8v1h-8zM682,618h1v1h-1zM686,618h1v1h-1zM689,618h2v1h-2zM693,618h2v1h-2zM697,618h3v1h-3zM701,618h1v1h-1zM704,618h1v1h-1zM706,618h1v1h-1zM709,618h2v1h-2zM666,619h1v1h-1zM671,619h1v1h-1zM673,619h1v1h-1zM676,619h1v1h-1zM681,619h7v1h-7zM690,619h2v1h-2zM695,619h2v1h-2zM698,619h1v1h-1zM700,619h1v1h-1zM704,619h1v1h-1zM710,619h2v1h-2zM659,620h5v1h-5zM666,620h2v1h-2zM669,620h4v1h-4zM675,620h1v1h-1zM679,620h1v1h-1zM682,620h1v1h-1zM684,620h1v1h-1zM690,620h4v1h-4zM696,620h2v1h-2zM701,620h1v1h-1zM705,620h2v1h-2zM708,620h2v1h-2zM711,620h1v1h-1zM660,621h2v1h-2zM670,621h2v1h-2zM673,621h1v1h-1zM675,621h1v1h-1zM678,621h2v1h-2zM681,621h1v1h-1zM683,621h1v1h-1zM688,621h1v1h-1zM692,621h1v1h-1zM697,621h2v1h-2zM701,621h4v1h-4zM660,622h1v1h-1zM663,622h1v1h-1zM668,622h2v1h-2zM671,622h2v1h-2zM675,622h1v1h-1zM677,622h1v1h-1zM679,622h1v1h-1zM682,622h3v1h-3zM687,622h1v1h-1zM689,622h2v1h-2zM692,622h1v1h-1zM695,622h1v1h-1zM697,622h1v1h-1zM700,622h3v1h-3zM708,622h1v1h-1zM711,622h1v1h-1zM660,623h2v1h-2zM665,623h1v1h-1zM667,623h4v1h-4zM672,623h2v1h-2zM682,623h1v1h-1zM684,623h1v1h-1zM688,623h2v1h-2zM693,623h1v1h-1zM695,623h1v1h-1zM698,623h1v1h-1zM701,623h2v1h-2zM706,623h3v1h-3zM710,623h1v1h-1zM659,624h1v1h-1zM661,624h2v1h-2zM668,624h3v1h-3zM674,624h2v1h-2zM678,624h1v1h-1zM680,624h1v1h-1zM682,624h1v1h-1zM685,624h3v1h-3zM690,624h3v1h-3zM695,624h3v1h-3zM699,624h2v1h-2zM703,624h2v1h-2zM706,624h2v1h-2zM709,624h1v1h-1zM661,625h1v1h-1zM668,625h2v1h-2zM674,625h1v1h-1zM679,625h1v1h-1zM681,625h4v1h-4zM687,625h6v1h-6zM697,625h5v1h-5zM705,625h1v1h-1zM708,625h2v1h-2zM659,626h1v1h-1zM663,626h1v1h-1zM666,626h5v1h-5zM672,626h3v1h-3zM678,626h1v1h-1zM682,626h1v1h-1zM685,626h3v1h-3zM692,626h2v1h-2zM696,626h1v1h-1zM698,626h4v1h-4zM703,626h1v1h-1zM706,626h1v1h-1zM708,626h1v1h-1z" fill="#1e2228"/>
<rect x="687.7" y="576.8" width="8.7" height="3.9" fill="#f4f4f4"/>
<circle cx="691.7" cy="603.5" r="2.5" fill="#1e2228"/>
<rect x="657.2" y="571.2" width="87.1" height="116.4" fill="none" stroke="#f4f4f4" stroke-width="2"/>
<rect x="715.0" y="576.0" width="20.7" height="3.5" fill="#f0f0f0"/>
<path d="M739.6,576.0 L739.6,686.0" stroke="#333" stroke-width="0.8" fill="none"/>
<path d="M660.5,628.0 L660.5,685.3 L714.0,685.3" stroke="#333" stroke-width="0.8" fill="none"/>
<rect x="680.7" y="650.0" width="24.3" height="23.5" fill="#212830"/>
<rect x="684.3" y="659.3" width="16.7" height="4.7" fill="#f4f4f4"/>
<rect x="690.0" y="630.0" width="4.0" height="2.0" fill="#212830"/>
<rect x="690.0" y="634.0" width="4.0" height="2.0" fill="#212830"/>
<rect x="690.0" y="638.0" width="4.0" height="2.0" fill="#212830"/>
<rect x="690.0" y="642.0" width="4.0" height="2.0" fill="#212830"/>
<rect x="690.0" y="646.0" width="4.0" height="2.0" fill="#212830"/>
<rect x="672.8" y="651.0" width="4.7" height="1.5" fill="#212830"/>
<rect x="672.8" y="654.0" width="4.7" height="1.5" fill="#f4f4f4"/>
<rect x="672.8" y="657.0" width="4.7" height="1.5" fill="#212830"/>
<rect x="672.8" y="660.0" width="4.7" height="1.5" fill="#f4f4f4"/>
<rect x="672.8" y="663.0" width="4.7" height="1.5" fill="#212830"/>
<rect x="672.8" y="666.0" width="4.7" height="1.5" fill="#f4f4f4"/>
<rect x="672.8" y="669.0" width="4.7" height="1.5" fill="#212830"/>
<rect x="706.0" y="655.4" width="1.0" height="12.6" fill="#2a2e34"/>
<rect x="708.0" y="655.4" width="1.0" height="12.6" fill="#2a2e34"/>
<rect x="710.0" y="655.4" width="1.0" height="12.6" fill="#2a2e34"/>
<rect x="712.0" y="655.4" width="1.0" height="12.6" fill="#2a2e34"/>
<rect x="720.0" y="658.5" width="11.8" height="6.3" fill="#f4f4f4"/>
<path d="M657.0,547.0 L744.0,547.0" stroke="#e6e6e6" stroke-width="0.8" fill="none"/>
<path d="M657.0,557.8 L744.0,557.8" stroke="#e6e6e6" stroke-width="0.8" fill="none"/>
<path d="M657.0,545.0 L657.0,571.0" stroke="#bbb" stroke-width="0.6" fill="none"/>
<path d="M744.0,545.0 L744.0,571.0" stroke="#bbb" stroke-width="0.6" fill="none"/>
<path d="M670.0,553.0 L670.0,560.0" stroke="#bbb" stroke-width="0.6" fill="none"/>
<path d="M688.0,553.0 L688.0,560.0" stroke="#bbb" stroke-width="0.6" fill="none"/>
<path d="M712.0,553.0 L712.0,560.0" stroke="#bbb" stroke-width="0.6" fill="none"/>
<path d="M732.0,553.0 L732.0,560.0" stroke="#bbb" stroke-width="0.6" fill="none"/>
<rect x="661.0" y="552.0" width="9.0" height="3.5" fill="#f8f8f8"/>
<rect x="688.0" y="552.0" width="8.0" height="3.5" fill="#f8f8f8"/>
<rect x="723.0" y="552.0" width="9.0" height="3.5" fill="#f8f8f8"/>
<rect x="695.0" y="542.5" width="10.0" height="3.0" fill="#f8f8f8"/>
<rect x="679.0" y="559.0" width="31.4" height="4.5" fill="#f8f8f8"/>
<rect x="688.0" y="563.5" width="22.4" height="4.0" fill="#f8f8f8"/>
<path d="M679.0,567.0 L676.0,571.0" stroke="#e6e6e6" stroke-width="0.8" fill="none"/>
<path d="M642.6,572.0 L642.6,688.0" stroke="#e6e6e6" stroke-width="0.8" fill="none"/>
<path d="M640.0,572.0 L657.0,572.0" stroke="#bbb" stroke-width="0.6" fill="none"/>
<path d="M640.0,588.0 L657.0,588.0" stroke="#bbb" stroke-width="0.6" fill="none"/>
<path d="M640.0,624.0 L657.0,624.0" stroke="#bbb" stroke-width="0.6" fill="none"/>
<path d="M640.0,648.0 L657.0,648.0" stroke="#bbb" stroke-width="0.6" fill="none"/>
<path d="M640.0,672.0 L657.0,672.0" stroke="#bbb" stroke-width="0.6" fill="none"/>
<path d="M640.0,688.0 L657.0,688.0" stroke="#bbb" stroke-width="0.6" fill="none"/>
<rect x="639.0" y="576.0" width="4.8" height="8.5" fill="#f8f8f8"/>
<rect x="639.0" y="602.6" width="4.8" height="8.4" fill="#f8f8f8"/>
<rect x="639.0" y="633.0" width="4.8" height="9.0" fill="#f8f8f8"/>
<rect x="639.0" y="657.0" width="4.8" height="8.6" fill="#f8f8f8"/>
<rect x="639.0" y="676.5" width="4.8" height="8.5" fill="#f8f8f8"/>
<path d="M757.6,572.0 L757.6,688.0" stroke="#e6e6e6" stroke-width="0.8" fill="none"/>
<path d="M768.5,572.0 L768.5,688.0" stroke="#e6e6e6" stroke-width="0.8" fill="none"/>
<path d="M744.0,572.0 L770.0,572.0" stroke="#bbb" stroke-width="0.6" fill="none"/>
<path d="M744.0,609.0 L770.0,609.0" stroke="#bbb" stroke-width="0.6" fill="none"/>
<path d="M744.0,642.0 L770.0,642.0" stroke="#bbb" stroke-width="0.6" fill="none"/>
<path d="M744.0,688.0 L770.0,688.0" stroke="#bbb" stroke-width="0.6" fill="none"/>
<rect x="752.8" y="586.0" width="4.8" height="8.0" fill="#f8f8f8"/>
<rect x="752.8" y="621.0" width="4.8" height="9.0" fill="#f8f8f8"/>
<rect x="752.8" y="661.0" width="4.8" height="9.0" fill="#f8f8f8"/>
<rect x="762.5" y="620.0" width="4.8" height="12.0" fill="#f8f8f8"/>
<path d="M657.0,702.0 L748.0,702.0" stroke="#e6e6e6" stroke-width="0.8" fill="none"/>
<path d="M657.0,688.0 L657.0,705.0" stroke="#bbb" stroke-width="0.6" fill="none"/>
<path d="M673.0,688.0 L673.0,705.0" stroke="#bbb" stroke-width="0.6" fill="none"/>
<path d="M706.0,688.0 L706.0,705.0" stroke="#bbb" stroke-width="0.6" fill="none"/>
<path d="M716.0,688.0 L716.0,705.0" stroke="#bbb" stroke-width="0.6" fill="none"/>
<path d="M744.0,688.0 L744.0,705.0" stroke="#bbb" stroke-width="0.6" fill="none"/>
<rect x="661.0" y="697.0" width="9.0" height="5.0" fill="#f8f8f8"/>
<rect x="685.0" y="697.0" width="9.0" height="4.5" fill="#f8f8f8"/>
<rect x="706.0" y="697.0" width="9.0" height="5.0" fill="#f8f8f8"/>
<rect x="723.0" y="697.0" width="9.0" height="4.5" fill="#f8f8f8"/>
<rect x="738.0" y="697.0" width="6.0" height="5.0" fill="#f8f8f8"/>
<rect x="603.4" y="696.6" width="42.9" height="4.1" fill="#f8f8f8"/>
<rect x="615.5" y="700.7" width="30.8" height="3.3" fill="#f8f8f8"/>
<path d="M646.0,701.0 L652.0,701.0 L662.0,688.0" stroke="#e6e6e6" stroke-width="0.8" fill="none"/>
<path d="M778,629.5 L786.7,621.9 V637.8z" fill="#f2f2f2"/><circle cx="786.1" cy="629.5" r="4.6" fill="#212830" stroke="#eee" stroke-width="1"/>
<text x="786.1" y="632.3" font-size="7.5" fill="#f4f4f4" text-anchor="middle" font-weight="bold" xml:space="preserve" style="font-family:'Liberation Sans'">2</text>
<path d="M700.7,708.2 L709,716 H692.5z" fill="#f2f2f2"/><circle cx="700.7" cy="716" r="4.3" fill="#212830" stroke="#eee" stroke-width="1"/>
<text x="700.7" y="718.8" font-size="7.5" fill="#f4f4f4" text-anchor="middle" font-weight="bold" xml:space="preserve" style="font-family:'Liberation Sans'">1</text>
<circle cx="590.7" cy="748.7" r="5.5" fill="none" stroke="#e6e6e6" stroke-width="1"/>
<path d="M582.0,748.7 L633.0,748.7" stroke="#cfcfcf" stroke-width="1" fill="none"/>
<text x="600" y="745" font-size="7.5" fill="#bbb" text-anchor="start" font-weight="normal" xml:space="preserve" style="font-family:'Liberation Sans'" textLength="24.5" lengthAdjust="spacingAndGlyphs">DENAH</text>
<rect x="600.0" y="749.2" width="10.0" height="3.4" fill="#f8f8f8"/>
<rect x="613.0" y="749.2" width="10.0" height="3.4" fill="#f8f8f8"/>
<path d="M16.5,746.0 L16.5,786.5 L56.5,786.5" stroke="#ddd" stroke-width="1.1" fill="none"/>
<rect x="13" y="782.5" width="8" height="8" fill="none" stroke="#ddd" stroke-width="1"/>
<path d="M18.0,732.5 L22.6,738.0 L27.0,732.5" stroke="#ddd" stroke-width="1.1" fill="none"/>
<path d="M22.6,738.0 L22.6,743.0" stroke="#ddd" stroke-width="1.1" fill="none"/>
<path d="M60.5,775.0 L70.0,784.5" stroke="#ddd" stroke-width="1.1" fill="none"/>
<path d="M70.0,775.0 L60.5,784.5" stroke="#ddd" stroke-width="1.1" fill="none"/>
<rect x="1482" y="150.5" width="8" height="2" fill="#eee"/>
<rect x="1497.5" y="148.5" width="6" height="6" fill="none" stroke="#eee" stroke-width="1.2"/><path d="M1499.5,146.8 h5.7 v5.7" fill="none" stroke="#eee" stroke-width="1"/>
<path d="M1514,147.5 l7,7 M1521,147.5 l-7,7" stroke="#eee" stroke-width="1.5"/>
<circle cx="1463.8" cy="223.4" r="43" fill="none" stroke="#474c54" stroke-width="10.5"/>
<rect x="1443.5" y="203" width="41" height="41" fill="#b5b5b5"/><rect x="1451" y="210.5" width="26" height="25.5" fill="#a9a9a9"/>
<text x="1455.5" y="227.2" font-size="10.5" fill="#5a5a5a" text-anchor="start" font-weight="bold" xml:space="preserve" style="font-family:'Liberation Sans'" textLength="17.5" lengthAdjust="spacingAndGlyphs">TOP</text>
<text x="1463.8" y="186.1" font-size="16.5" fill="#c4c4c4" text-anchor="middle" font-weight="bold" xml:space="preserve" style="font-family:'Liberation Sans'">N</text>
<text x="1463.8" y="276.0" font-size="16.5" fill="#c4c4c4" text-anchor="middle" font-weight="bold" xml:space="preserve" style="font-family:'Liberation Sans'">S</text>
<text x="1419" y="229.9" font-size="16.5" fill="#c4c4c4" text-anchor="middle" font-weight="bold" xml:space="preserve" style="font-family:'Liberation Sans'">W</text>
<text x="1509" y="229.9" font-size="16.5" fill="#c4c4c4" text-anchor="middle" font-weight="bold" xml:space="preserve" style="font-family:'Liberation Sans'">E</text>
<rect x="1445" y="293.4" width="37.7" height="13.6" rx="3" fill="#8a8a8a"/>
<text x="1450" y="304" font-size="8.5" fill="#6a6a6a" text-anchor="start" font-weight="normal" xml:space="preserve" style="font-family:'Liberation Sans'">WCS</text>
<path d="M1473,299 h5 l-2.5,3z" fill="#777"/>
<rect x="1501" y="327.6" width="26" height="168.4" rx="3" fill="#5b5e63" stroke="#4a4d52" stroke-width="0.8"/>
<circle cx="1522.5" cy="331.5" r="1.8" fill="none" stroke="#46494e" stroke-width="0.8"/><circle cx="1522.5" cy="492" r="1.8" fill="none" stroke="#46494e" stroke-width="0.8"/>
<circle cx="1514" cy="351" r="7" fill="none" stroke="#46494e" stroke-width="1.6"/><circle cx="1514" cy="351" r="3.5" fill="none" stroke="#46494e" stroke-width="1.2"/>
<path d="M1512.5,366 h3 l-1.5,1.5z M1512.5,424 h3 l-1.5,1.5z M1512.5,453 h3 l-1.5,1.5z" fill="#46494e"/>
<path d="M1508,388 v-9 a1.2,1.2 0 0 1 2.4,0 v6 v-8 a1.2,1.2 0 0 1 2.4,0 v8 v-7 a1.2,1.2 0 0 1 2.4,0 v7 v-5 a1.2,1.2 0 0 1 2.4,0 v8 q0,5 -5,5 q-3,0 -5,-4 l-2,-3" fill="none" stroke="#46494e" stroke-width="1"/>
<path d="M1506,399 l14,14 M1520,399 l-6,6 M1506,413 l5,-5" stroke="#46494e" stroke-width="1"/><circle cx="1516" cy="412" r="3" fill="none" stroke="#46494e" stroke-width="1"/>
<path d="M1514,430 v22 M1511,434 l3,-4 l3,4" stroke="#46494e" stroke-width="1.2" fill="none"/><ellipse cx="1514" cy="443" rx="7" ry="3" fill="none" stroke="#46494e" stroke-width="1.2"/>
<rect x="1505" y="463" width="4.5" height="4.5" fill="none" stroke="#46494e" stroke-width="0.9"/><rect x="1511.5" y="463" width="4.5" height="4.5" fill="none" stroke="#46494e" stroke-width="0.9"/><rect x="1518" y="463" width="4.5" height="4.5" fill="none" stroke="#46494e" stroke-width="0.9"/><rect x="1505" y="470" width="13" height="9" fill="none" stroke="#46494e" stroke-width="0.9"/><path d="M1509.5,472 l4.5,2.5 l-4.5,2.5z" fill="#46494e"/>
</svg>
<svg class="a" style="left:0;top:700px" width="1536" height="127" viewBox="0 700 1536 127">
<rect x="508.4" y="723" width="557.6" height="23.4" fill="#7a7c7e" fill-opacity="0.62"/>
<text x="510" y="732.5" font-size="9.4" fill="#d8d8d8" text-anchor="start" font-weight="normal" xml:space="preserve" style="font-family:'Liberation Mono'">Autodesk DWG.  This file is a TrustedDWG last saved by an Autodesk application or Autodesk licensed</text>
<text x="510" y="744.5" font-size="9.4" fill="#d8d8d8" text-anchor="start" font-weight="normal" xml:space="preserve" style="font-family:'Liberation Mono'">application.</text>
<rect x="508.4" y="751.5" width="47.6" height="11.1" rx="1.5" fill="#7a7c7e" fill-opacity="0.62"/>
<text x="510" y="760.1" font-size="9.4" fill="#e8e8e8" text-anchor="start" font-weight="normal" xml:space="preserve" style="font-family:'Liberation Mono'">Command:</text>
<rect x="508.4" y="767.4" width="47.6" height="11.1" rx="1.5" fill="#7a7c7e" fill-opacity="0.62"/>
<text x="510" y="776.0" font-size="9.4" fill="#e8e8e8" text-anchor="start" font-weight="normal" xml:space="preserve" style="font-family:'Liberation Mono'">Command:</text>
<defs><linearGradient id="cg" x1="0" y1="0" x2="0" y2="1"><stop offset="0" stop-color="#5c5c5c"/><stop offset="1" stop-color="#404040"/></linearGradient></defs>
<rect x="460.7" y="781.8" width="42.5" height="20" fill="url(#cg)"/>
<rect x="503" y="781.8" width="573" height="19.8" fill="#c5c6c8"/>
<rect x="503" y="798.5" width="573" height="2" fill="#e6e8e8"/>
<path d="M464.5,786 v12 M467,786 v12" stroke="#888" stroke-width="1" stroke-dasharray="1,1"/>
<path d="M472.5,788 l6.5,6.5 M479,788 l-6.5,6.5" stroke="#e8e8e8" stroke-width="1.3"/>
<path d="M490,789 l7,7" stroke="#ccc" stroke-width="2"/><circle cx="489.5" cy="788.5" r="2.5" fill="none" stroke="#ccc" stroke-width="1.3"/>
<rect x="507.5" y="786.5" width="12" height="11" rx="1.5" fill="#b8b8b8" stroke="#999" stroke-width="0.8"/><path d="M510,789 l3,2 l-3,2 M513,795 h4" stroke="#333" stroke-width="1" fill="none"/>
<path d="M522.0,790 h4 l-2.0,2.4z" fill="#777"/>
<text x="533" y="795" font-size="9.2" fill="#888" text-anchor="start" font-weight="normal" xml:space="preserve" style="font-family:'Liberation Mono'" font-style="italic">Type a command</text>
<path d="M1066,795 l3.5,-3.5 l3.5,3.5z" fill="#222"/>
</svg>
<svg class="a" style="left:0;top:803px" width="1536" height="24" viewBox="0 803 1536 24">
<rect x="0" y="803" width="1536" height="24" fill="#3a3a3a"/>
<rect x="0" y="825.5" width="1536" height="1.5" fill="#4a3a30"/>
<path d="M8,803 h47 l-4,12 q-1,2 -3,2 h-33 q-2,0 -3,-2z" fill="#6a6a6a"/>
<text x="19" y="813.5" font-size="9.5" fill="#f4f4f4" text-anchor="start" font-weight="bold" xml:space="preserve" style="font-family:'Liberation Sans'">Model</text>
<path d="M57,803 h52 l-4,12 q-1,2 -3,2 h-38 q-2,0 -3,-2z" fill="#4e4e4e"/>
<text x="65" y="813.5" font-size="9.5" fill="#c8c8c8" text-anchor="start" font-weight="normal" xml:space="preserve" style="font-family:'Liberation Sans'">Layout1</text>
<path d="M114,803 h15 l-3,11 q-1,2 -3,2 h-10 q-2,0 -2,-2z" fill="#4a4a4a"/>
<path d="M119.5,806.5 v6 M116.5,809.5 h6" stroke="#ddd" stroke-width="1.3"/>
<rect x="562.8" y="804.5" width="119.20000000000005" height="19.2" fill="#4b4b4b" stroke="#5e5e5e" stroke-width="1"/>
<rect x="685.2" y="804.5" width="36.89999999999998" height="19.2" fill="#4b4b4b" stroke="#5e5e5e" stroke-width="1"/>
<rect x="724.9" y="804.5" width="50.0" height="19.2" fill="#4b4b4b" stroke="#5e5e5e" stroke-width="1"/>
<rect x="778.1" y="804.5" width="59.10000000000002" height="19.2" fill="#4b4b4b" stroke="#5e5e5e" stroke-width="1"/>
<rect x="838.2" y="804.5" width="60.299999999999955" height="19.2" fill="#4b4b4b" stroke="#5e5e5e" stroke-width="1"/>
<rect x="899.5" y="804.5" width="51" height="19.2" fill="#4b4b4b" stroke="#5e5e5e" stroke-width="1"/>
<rect x="951.5" y="804.5" width="39" height="19.2" fill="#4b4b4b" stroke="#5e5e5e" stroke-width="1"/>
<rect x="991.5" y="804.5" width="19.700000000000045" height="19.2" fill="#4b4b4b" stroke="#5e5e5e" stroke-width="1"/>
<rect x="1012.2" y="804.5" width="32.299999999999955" height="19.2" fill="#4b4b4b" stroke="#5e5e5e" stroke-width="1"/>
<rect x="1045.5" y="804.5" width="81.5" height="19.2" fill="#4b4b4b" stroke="#5e5e5e" stroke-width="1"/>
<rect x="1128.0" y="804.5" width="117.5" height="19.2" fill="#4b4b4b" stroke="#5e5e5e" stroke-width="1"/>
<rect x="1246.5" y="804.5" width="31" height="19.2" fill="#4b4b4b" stroke="#5e5e5e" stroke-width="1"/>
<rect x="1278.5" y="804.5" width="20.59999999999991" height="19.2" fill="#4b4b4b" stroke="#5e5e5e" stroke-width="1"/>
<rect x="1300.1" y="804.5" width="80.40000000000009" height="19.2" fill="#4b4b4b" stroke="#5e5e5e" stroke-width="1"/>
<rect x="1381.5" y="804.5" width="17" height="19.2" fill="#4b4b4b" stroke="#5e5e5e" stroke-width="1"/>
<rect x="1399.5" y="804.5" width="33" height="19.2" fill="#4b4b4b" stroke="#5e5e5e" stroke-width="1"/>
<rect x="1433.5" y="804.5" width="19" height="19.2" fill="#4b4b4b" stroke="#5e5e5e" stroke-width="1"/>
<rect x="1453.5" y="804.5" width="41" height="19.2" fill="#4b4b4b" stroke="#5e5e5e" stroke-width="1"/>
<rect x="1495.5" y="804.5" width="39" height="19.2" fill="#4b4b4b" stroke="#5e5e5e" stroke-width="1"/>
<text x="569.6" y="816.8" font-size="9.6" fill="#f0f0f0" text-anchor="start" font-weight="normal" xml:space="preserve" style="font-family:'Liberation Sans'" textLength="109.3" lengthAdjust="spacingAndGlyphs">43812.15, 35366.86, 0.00</text>
<text x="687.6" y="816.8" font-size="9.6" fill="#f0f0f0" text-anchor="start" font-weight="normal" xml:space="preserve" style="font-family:'Liberation Sans'" textLength="32.2" lengthAdjust="spacingAndGlyphs">MODEL</text>
<rect x="745.3" y="806" width="17.300000000000068" height="16" fill="#5b8fc6"/>
<rect x="799" y="806" width="17" height="16" fill="#5b8fc6"/>
<rect x="819" y="806" width="17" height="16" fill="#5b8fc6"/>
<rect x="901.7" y="806" width="17.299999999999955" height="16" fill="#5b8fc6"/>
<rect x="920.4" y="806" width="17.600000000000023" height="16" fill="#5b8fc6"/>
<rect x="973" y="806" width="17" height="16" fill="#5b8fc6"/>
<rect x="1046" y="806" width="17.75" height="16" fill="#5b8fc6"/>
<rect x="1096" y="806" width="18" height="16" fill="#5b8fc6"/>
<rect x="1130" y="806" width="18" height="16" fill="#5b8fc6"/>
<rect x="1455" y="806" width="18" height="16" fill="#5b8fc6"/>
<path d="M728,810 h10 M728,814 h10 M728,818 h10 M730,808 v12 M733,808 v12 M736,808 v12" stroke="#e8e8e8" stroke-width="0.9"/>
<rect x="749.0" y="809.0" width="1.6" height="1.6" fill="#fff"/><rect x="749.0" y="812.5" width="1.6" height="1.6" fill="#fff"/><rect x="749.0" y="816.0" width="1.6" height="1.6" fill="#fff"/><rect x="752.5" y="809.0" width="1.6" height="1.6" fill="#fff"/><rect x="752.5" y="812.5" width="1.6" height="1.6" fill="#fff"/><rect x="752.5" y="816.0" width="1.6" height="1.6" fill="#fff"/><rect x="756.0" y="809.0" width="1.6" height="1.6" fill="#fff"/><rect x="756.0" y="812.5" width="1.6" height="1.6" fill="#fff"/><rect x="756.0" y="816.0" width="1.6" height="1.6" fill="#fff"/>
<path d="M766.5,812 h5 l-2.5,3.0z" fill="#e8e8e8"/>
<path d="M859.5,812 h5 l-2.5,3.0z" fill="#e8e8e8"/>
<path d="M891.5,812 h5 l-2.5,3.0z" fill="#e8e8e8"/>
<path d="M942.5,812 h5 l-2.5,3.0z" fill="#e8e8e8"/>
<path d="M1034.5,812 h5 l-2.5,3.0z" fill="#e8e8e8"/>
<path d="M1086.5,812 h5 l-2.5,3.0z" fill="#e8e8e8"/>
<path d="M1118.5,812 h5 l-2.5,3.0z" fill="#e8e8e8"/>
<path d="M1237.5,812 h5 l-2.5,3.0z" fill="#e8e8e8"/>
<path d="M1270.5,812 h5 l-2.5,3.0z" fill="#e8e8e8"/>
<path d="M1370.5,812 h5 l-2.5,3.0z" fill="#e8e8e8"/>
<path d="M1423.5,812 h5 l-2.5,3.0z" fill="#e8e8e8"/>
<rect x="780" y="814" width="5" height="5" fill="#ddd"/><path d="M784,814 v-4 h3 v-3 h4 v4 h-4" stroke="#e8e8e8" stroke-width="0.9" fill="none"/>
<path d="M803,809 v5 M800.5,811 h5" stroke="#fff" stroke-width="1"/><rect x="805" y="813" width="8" height="4" fill="#fff"/>
<path d="M823,808 v12 h11" stroke="#fff" stroke-width="1" fill="none"/><path d="M823,816 h4 v4" stroke="#fff" stroke-width="0.7" fill="none"/>
<circle cx="846" cy="815" r="5" fill="none" stroke="#e8e8e8" stroke-width="0.9"/><path d="M846,815 l6,-6 M846,815 h8" stroke="#e8e8e8" stroke-width="0.9"/>
<path d="M873,808 l9,12" stroke="#c86040" stroke-width="1"/><path d="M877,807 v14" stroke="#50a050" stroke-width="1"/>
<path d="M904,820 h13 M904,820 l10,-9" stroke="#fff" stroke-width="1"/>
<rect x="924" y="809" width="11" height="10" fill="none" stroke="#fff" stroke-width="1"/><rect x="922.5" y="807.5" width="3" height="3" fill="#9cf"/>
<path d="M955,809 h12 M955,812 h10 M955,815 h12 M955,818 h8" stroke="#e8e8e8" stroke-width="1.4"/>
<rect x="975" y="808" width="1.5" height="1.5" fill="#fff"/><rect x="975" y="811" width="1.5" height="1.5" fill="#fff"/><rect x="975" y="814" width="1.5" height="1.5" fill="#fff"/><rect x="975" y="817" width="1.5" height="1.5" fill="#fff"/><rect x="978" y="808" width="1.5" height="1.5" fill="#fff"/><rect x="978" y="811" width="1.5" height="1.5" fill="#fff"/><rect x="978" y="814" width="1.5" height="1.5" fill="#fff"/><rect x="978" y="817" width="1.5" height="1.5" fill="#fff"/><rect x="981" y="808" width="1.5" height="1.5" fill="#fff"/><rect x="981" y="811" width="1.5" height="1.5" fill="#fff"/><rect x="981" y="814" width="1.5" height="1.5" fill="#fff"/><rect x="981" y="817" width="1.5" height="1.5" fill="#fff"/><rect x="984" y="808" width="1.5" height="1.5" fill="#fff"/><rect x="984" y="811" width="1.5" height="1.5" fill="#fff"/><rect x="984" y="814" width="1.5" height="1.5" fill="#fff"/><rect x="984" y="817" width="1.5" height="1.5" fill="#fff"/><rect x="987" y="808" width="1.5" height="1.5" fill="#fff"/><rect x="987" y="811" width="1.5" height="1.5" fill="#fff"/><rect x="987" y="814" width="1.5" height="1.5" fill="#fff"/><rect x="987" y="817" width="1.5" height="1.5" fill="#fff"/>
<rect x="997" y="811" width="10" height="10" fill="#50c0b0"/><path d="M994,808 h4 M996,806 v4" stroke="#e8e8e8" stroke-width="0.9"/>
<path d="M1019,810 l3,-3 h8 v8 l-3,3 h-8z M1019,810 h8 v8 M1027,810 l3,-3" stroke="#e8e8e8" stroke-width="0.9" fill="none"/><rect x="1016" y="816" width="3.5" height="4" fill="none" stroke="#f0b040" stroke-width="0.8"/>
<path d="M1050,808 v12 h11 M1050,808 l-2,3 M1050,808 l2,3" stroke="#fff" stroke-width="1.1" fill="none"/>
<rect x="1070" y="809" width="9" height="10" fill="none" stroke="#e8e8e8" stroke-width="0.9"/><path d="M1072,807.5 h8 q1.5,0 1.5,1.5 v8" stroke="#e8e8e8" stroke-width="0.8" fill="none"/>
<path d="M1105,807.5 l6.5,11.5 h-13z M1105,807.5 v7 l-6.5,4.5 M1105,814.5 l6.5,4.5" fill="none" stroke="#fff" stroke-width="1"/><circle cx="1105" cy="808" r="1.5" fill="#fff"/><circle cx="1098.5" cy="819" r="1.5" fill="#fff"/><circle cx="1111.5" cy="819" r="1.5" fill="#fff"/>
<path d="M1138,807.5 l3.2,9 l2.8,4 l-6,-2.5 l-6,2.5 l2.8,-4z" fill="#fff"/>
<path d="M1157,807.5 l3.2,9 l2.8,4 l-6,-2.5 l-6,2.5 l2.8,-4z" fill="#e8e8e8"/>
<path d="M1175.5,807.5 l3.2,9 l2.8,4 l-6,-2.5 l-6,2.5 l2.8,-4z" fill="#e8e8e8"/>
<circle cx="1143.5" cy="809.5" r="1.8" fill="none" stroke="#fff" stroke-width="0.9"/><path d="M1161,807 l-2,3 h2.5 l-2,3" stroke="#ddd" stroke-width="0.9" fill="none"/>
<text x="1190" y="816.8" font-size="9.6" fill="#e8e8e8" text-anchor="start" font-weight="normal" xml:space="preserve" style="font-family:'Liberation Sans'" textLength="43.4" lengthAdjust="spacingAndGlyphs">1:1 / 100%</text>
<circle cx="1257" cy="814" r="5.6" fill="none" stroke="#e8e8e8" stroke-width="2.2" stroke-dasharray="1.8,1.8"/><circle cx="1257" cy="814" r="4" fill="#e8e8e8"/><circle cx="1257" cy="814" r="1.7" fill="#4b4b4b"/>
<path d="M1289,807 v14 M1282,814 h14" stroke="#e8e8e8" stroke-width="1.4"/>
<rect x="1307" y="807" width="6" height="14" fill="#ddd"/><path d="M1310,809 h3 M1310,812 h3 M1310,815 h3 M1310,818 h3" stroke="#4b4b4b" stroke-width="0.8"/>
<text x="1324.8" y="816.8" font-size="9.6" fill="#e8e8e8" text-anchor="start" font-weight="normal" xml:space="preserve" style="font-family:'Liberation Sans'" textLength="34.7" lengthAdjust="spacingAndGlyphs">Decimal</text>
<rect x="1384.5" y="808" width="10" height="12" fill="none" stroke="#e8e8e8" stroke-width="0.9"/><path d="M1387,811 h5 M1387,814 h5 M1387,817 h5" stroke="#e8e8e8" stroke-width="0.8"/>
<rect x="1405" y="808" width="13" height="10" fill="none" stroke="#e8e8e8" stroke-width="1"/><rect x="1413" y="814" width="5" height="5" fill="#4b4b4b" stroke="#e8e8e8" stroke-width="0.8"/>
<rect x="1437" y="807" width="5" height="5" fill="none" stroke="#e8e8e8" stroke-width="0.8"/><circle cx="1447" cy="810" r="2.5" fill="none" stroke="#e8e8e8" stroke-width="0.8"/><path d="M1440,821 l2.5,-5 l2.5,5z" fill="none" stroke="#e8e8e8" stroke-width="0.8"/>
<circle cx="1464" cy="814" r="6" fill="#9cc4ec" stroke="#fff" stroke-width="1"/><path d="M1461,817 l6,-6" stroke="#333" stroke-width="1"/>
<rect x="1478" y="807" width="8" height="10" fill="#ddd"/><rect x="1480" y="812" width="6" height="6" fill="#f0c040"/><path d="M1485,817 l2,2 l3,-4" stroke="#5c5" stroke-width="1.2" fill="none"/>
<rect x="1500" y="809" width="13" height="10" fill="none" stroke="#e8e8e8" stroke-width="1"/><path d="M1502,817 l3,-3 M1511,811 l-3,3" stroke="#e8e8e8" stroke-width="1"/>
<path d="M1519,809 h14 M1519,814 h14 M1519,818.5 h14" stroke="#e8e8e8" stroke-width="1.6"/>
</svg>
</body></html>
